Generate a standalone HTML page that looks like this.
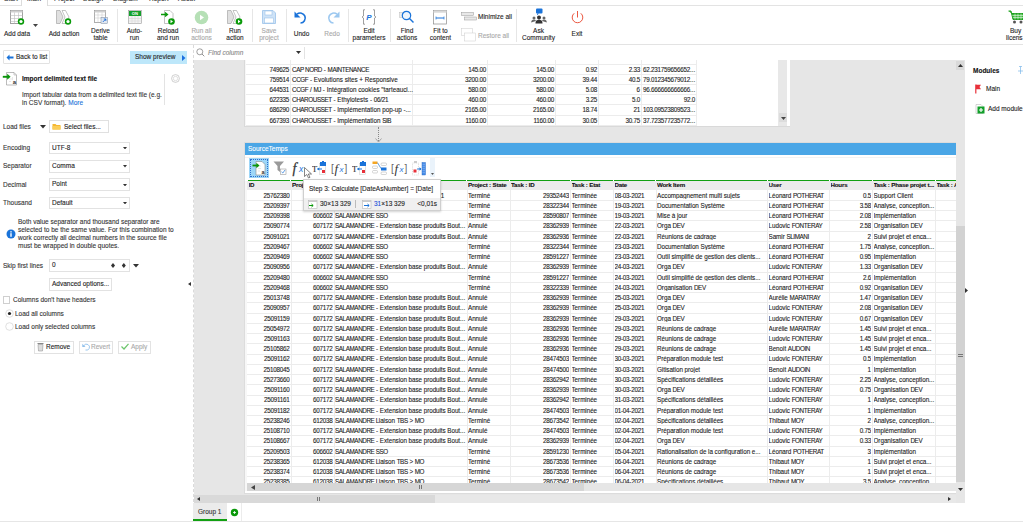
<!DOCTYPE html><html><head><meta charset="utf-8"><style>
html,body{margin:0;padding:0;width:1023px;height:522px;overflow:hidden;background:#fff;font-family:'Liberation Sans',sans-serif;}
.t{position:absolute;white-space:nowrap;-webkit-text-stroke:0.1px currentColor;}
.b{position:absolute;box-sizing:border-box;}
</style></head><body>
<div class="b" style="left:0px;top:0px;width:1023px;height:6px;background:#fff;border-bottom:1px solid #e3e3e3"></div>
<div class="b" style="left:21px;top:0px;width:27px;height:7px;background:#fff;border-left:1px solid #dcdcdc;border-right:1px solid #dcdcdc"></div>
<div class="t" style="left:4px;top:-4.90px;font-size:6.5px;line-height:7.80px;color:#333;font-weight:normal;">Start</div>
<div class="t" style="left:27px;top:-4.90px;font-size:6.5px;line-height:7.80px;color:#333;font-weight:normal;">Main</div>
<div class="t" style="left:54px;top:-4.90px;font-size:6.5px;line-height:7.80px;color:#333;font-weight:normal;">Project</div>
<div class="t" style="left:83px;top:-4.90px;font-size:6.5px;line-height:7.80px;color:#333;font-weight:normal;">Design</div>
<div class="t" style="left:113px;top:-4.90px;font-size:6.5px;line-height:7.80px;color:#333;font-weight:normal;">Diagram</div>
<div class="t" style="left:149px;top:-4.90px;font-size:6.5px;line-height:7.80px;color:#333;font-weight:normal;">Report</div>
<div class="t" style="left:178px;top:-4.90px;font-size:6.5px;line-height:7.80px;color:#333;font-weight:normal;">About</div>
<div class="b" style="left:0px;top:6px;width:1023px;height:39px;background:#fff;border-bottom:1px solid #e3e3e3"></div>
<div class="b" style="left:117px;top:9px;width:1px;height:33px;background:#e6e6e6"></div>
<div class="b" style="left:252px;top:9px;width:1px;height:33px;background:#e6e6e6"></div>
<div class="b" style="left:286px;top:9px;width:1px;height:33px;background:#e6e6e6"></div>
<div class="b" style="left:348px;top:9px;width:1px;height:33px;background:#e6e6e6"></div>
<div class="b" style="left:390px;top:9px;width:1px;height:33px;background:#e6e6e6"></div>
<div class="b" style="left:516px;top:9px;width:1px;height:33px;background:#e6e6e6"></div>
<svg class="b" style="left:10px;top:10px" width="15" height="15" viewBox="0 0 15 15"><rect x="0.5" y="0.5" width="12" height="13" fill="#fff" stroke="#8a8a8a" stroke-width="0.8"/>
<rect x="0.5" y="0.5" width="12" height="2" fill="#cfcfcf"/>
<path d="M0.5 5.5H12.5M0.5 8.5H12.5M0.5 11.5H12.5M4.5 2.5V13.5M8.5 2.5V13.5" stroke="#bdbdbd" stroke-width="0.6"/>
<circle cx="11" cy="11.5" r="3.2" fill="#0a9a0a"/><circle cx="11" cy="11.5" r="1.6" fill="#fff"/></svg>
<div class="t" style="left:-83px;width:200px;text-align:center;top:30.10px;font-size:6.5px;line-height:7.80px;color:#222;font-weight:normal;">Add data</div>
<svg class="b" style="left:33px;top:24px" width="5" height="3" viewBox="0 0 5 3"><path d="M0 0H5L2.5 3Z" fill="#444"/></svg>
<svg class="b" style="left:56px;top:10px" width="16" height="15" viewBox="0 0 16 15"><path d="M0.5 0.5H4L7 7L4 13.5H0.5Z" fill="#e0e0e0" stroke="#9a9a9a" stroke-width="0.6"/>
<path d="M6 0.5H9.5L13 7L9.5 13.5H6L9 7Z" fill="#fff" stroke="#9a9a9a" stroke-width="0.6"/>
<circle cx="12" cy="11.5" r="3.2" fill="#0a9a0a"/><circle cx="12" cy="11.5" r="1.6" fill="#fff"/></svg>
<div class="t" style="left:-36px;width:200px;text-align:center;top:30.10px;font-size:6.5px;line-height:7.80px;color:#222;font-weight:normal;">Add action</div>
<svg class="b" style="left:94px;top:10px" width="14" height="15" viewBox="0 0 14 15"><rect x="0.5" y="0.5" width="11" height="12" fill="#fff" stroke="#8a8a8a" stroke-width="0.7"/>
<rect x="0.5" y="0.5" width="11" height="2" fill="#cfcfcf"/>
<path d="M0.5 5H11.5M0.5 8H11.5M4 2.5V12.5M8 2.5V12.5" stroke="#c4c4c4" stroke-width="0.5"/>
<rect x="7" y="7.5" width="6.5" height="6" fill="#dfe6f0" stroke="#7a8aa0" stroke-width="0.5"/>
<path d="M8.8 12L11.8 9M9.8 9H11.8V11" stroke="#1e6fd9" stroke-width="0.9" fill="none"/></svg>
<div class="t" style="left:0.5px;width:200px;text-align:center;top:26.90px;font-size:6.5px;line-height:7.80px;color:#222;font-weight:normal;">Derive</div>
<div class="t" style="left:0.5px;width:200px;text-align:center;top:33.70px;font-size:6.5px;line-height:7.80px;color:#222;font-weight:normal;">table</div>
<svg class="b" style="left:128px;top:10px" width="14" height="14" viewBox="0 0 14 14"><rect x="0.5" y="0.5" width="13" height="13" fill="#f4f4f4" stroke="#9a9a9a" stroke-width="0.6"/>
<rect x="1" y="1" width="12" height="5" fill="#13a02b"/>
<text x="7" y="5.2" font-size="4.2" font-family="Liberation Sans" font-weight="bold" fill="#fff" text-anchor="middle">ON</text>
<path d="M1 8.5H13M1 11H13M4 6V13.5M7 6V13.5M10 6V13.5" stroke="#d0d0d0" stroke-width="0.5"/></svg>
<div class="t" style="left:34.5px;width:200px;text-align:center;top:26.90px;font-size:6.5px;line-height:7.80px;color:#222;font-weight:normal;">Auto-</div>
<div class="t" style="left:34.5px;width:200px;text-align:center;top:33.70px;font-size:6.5px;line-height:7.80px;color:#222;font-weight:normal;">run</div>
<svg class="b" style="left:160px;top:10px" width="16" height="15" viewBox="0 0 16 15"><path d="M4.5 0.5H10L13 3.5V13.5H4.5Z" fill="#fff" stroke="#9a9a9a" stroke-width="0.6"/>
<path d="M1 4.5H7M5 2.5L7.5 4.5L5 6.5" stroke="#0a9a0a" stroke-width="1.3" fill="none"/>
<circle cx="11.5" cy="11.5" r="3.3" fill="#0a9a0a"/><path d="M10.5 9.8V13.2L13 11.5Z" fill="#fff"/></svg>
<div class="t" style="left:68px;width:200px;text-align:center;top:26.90px;font-size:6.5px;line-height:7.80px;color:#222;font-weight:normal;">Reload</div>
<div class="t" style="left:68px;width:200px;text-align:center;top:33.70px;font-size:6.5px;line-height:7.80px;color:#222;font-weight:normal;">and run</div>
<svg class="b" style="left:194px;top:10px" width="15" height="15" viewBox="0 0 15 15"><circle cx="7.5" cy="7.5" r="6.8" fill="#b6e0b6"/><path d="M6 4.8V10.2L10 7.5Z" fill="#fff"/></svg>
<div class="t" style="left:101.5px;width:200px;text-align:center;top:26.90px;font-size:6.5px;line-height:7.80px;color:#a8a8a8;font-weight:normal;">Run all</div>
<div class="t" style="left:101.5px;width:200px;text-align:center;top:33.70px;font-size:6.5px;line-height:7.80px;color:#a8a8a8;font-weight:normal;">actions</div>
<svg class="b" style="left:227px;top:10px" width="16" height="15" viewBox="0 0 16 15"><path d="M0.5 0.5H4L7 7L4 13.5H0.5Z" fill="#e0e0e0" stroke="#9a9a9a" stroke-width="0.6"/>
<path d="M6 0.5H9.5L13 7L9.5 13.5H6L9 7Z" fill="#fff" stroke="#9a9a9a" stroke-width="0.6"/>
<circle cx="12" cy="11.5" r="3.3" fill="#0a9a0a"/><path d="M11 9.8V13.2L13.5 11.5Z" fill="#fff"/></svg>
<div class="t" style="left:135px;width:200px;text-align:center;top:26.90px;font-size:6.5px;line-height:7.80px;color:#222;font-weight:normal;">Run</div>
<div class="t" style="left:135px;width:200px;text-align:center;top:33.70px;font-size:6.5px;line-height:7.80px;color:#222;font-weight:normal;">action</div>
<svg class="b" style="left:262px;top:10px" width="14" height="14" viewBox="0 0 14 14"><path d="M0.5 0.5H11L13.5 3V13.5H0.5Z" fill="#cfe3f7" stroke="#9cc3ea" stroke-width="0.8"/>
<rect x="3" y="1" width="7" height="4" fill="#fff" stroke="#9cc3ea" stroke-width="0.6"/>
<rect x="2.5" y="8" width="9" height="5" fill="#fff" stroke="#9cc3ea" stroke-width="0.6"/></svg>
<div class="t" style="left:169px;width:200px;text-align:center;top:26.90px;font-size:6.5px;line-height:7.80px;color:#a8a8a8;font-weight:normal;">Save</div>
<div class="t" style="left:169px;width:200px;text-align:center;top:33.70px;font-size:6.5px;line-height:7.80px;color:#a8a8a8;font-weight:normal;">project</div>
<svg class="b" style="left:294px;top:11px" width="15" height="13" viewBox="0 0 15 13"><path d="M3 3.2 A5 5 0 1 1 6.5 12" stroke="#1a73d9" stroke-width="1.6" fill="none"/>
<path d="M0.5 0.5V6.5H6.5Z" fill="#1a73d9"/></svg>
<div class="t" style="left:201.5px;width:200px;text-align:center;top:30.10px;font-size:6.5px;line-height:7.80px;color:#222;font-weight:normal;">Undo</div>
<svg class="b" style="left:325px;top:11px" width="15" height="13" viewBox="0 0 15 13"><path d="M12 3.2 A5 5 0 1 0 8.5 12" stroke="#9cc8f0" stroke-width="1.6" fill="none"/>
<path d="M14.5 0.5V6.5H8.5Z" fill="#9cc8f0"/></svg>
<div class="t" style="left:232px;width:200px;text-align:center;top:30.10px;font-size:6.5px;line-height:7.80px;color:#a8a8a8;font-weight:normal;">Redo</div>
<svg class="b" style="left:361px;top:9px" width="16" height="16" viewBox="0 0 16 16"><path d="M4 0.8H2.5V7L1 8L2.5 9V15.2H4" stroke="#777" stroke-width="0.7" fill="none"/>
<path d="M12 0.8H13.5V7L15 8L13.5 9V15.2H12" stroke="#777" stroke-width="0.7" fill="none"/>
<text x="8" y="10.5" font-size="8" font-family="Liberation Sans" font-weight="bold" font-style="italic" fill="#1a73d9" text-anchor="middle">P</text></svg>
<div class="t" style="left:269px;width:200px;text-align:center;top:26.90px;font-size:6.5px;line-height:7.80px;color:#222;font-weight:normal;">Edit</div>
<div class="t" style="left:269px;width:200px;text-align:center;top:33.70px;font-size:6.5px;line-height:7.80px;color:#222;font-weight:normal;">parameters</div>
<svg class="b" style="left:399px;top:10px" width="16" height="15" viewBox="0 0 16 15"><rect x="0.5" y="2.5" width="5" height="5" fill="#eee" stroke="#bbb" stroke-width="0.5"/>
<circle cx="7.5" cy="5.5" r="4.2" fill="#eef5fd" stroke="#1a73d9" stroke-width="1.2"/>
<path d="M10.5 8.5L14.5 12.5" stroke="#1a73d9" stroke-width="1.5"/></svg>
<div class="t" style="left:307px;width:200px;text-align:center;top:26.90px;font-size:6.5px;line-height:7.80px;color:#222;font-weight:normal;">Find</div>
<div class="t" style="left:307px;width:200px;text-align:center;top:33.70px;font-size:6.5px;line-height:7.80px;color:#222;font-weight:normal;">actions</div>
<svg class="b" style="left:433px;top:10px" width="14" height="15" viewBox="0 0 14 15"><rect x="0.5" y="0.5" width="13" height="13.5" fill="#fff" stroke="#8a8a8a" stroke-width="0.7"/>
<rect x="0.5" y="0.5" width="13" height="2.2" fill="#d8d8d8"/>
<path d="M3 8H11" stroke="#1a73d9" stroke-width="1"/><path d="M3 6.5V9.5M11 6.5V9.5" stroke="#1a73d9" stroke-width="0.7"/></svg>
<div class="t" style="left:340.5px;width:200px;text-align:center;top:26.90px;font-size:6.5px;line-height:7.80px;color:#222;font-weight:normal;">Fit to</div>
<div class="t" style="left:340.5px;width:200px;text-align:center;top:33.70px;font-size:6.5px;line-height:7.80px;color:#222;font-weight:normal;">content</div>
<svg class="b" style="left:461px;top:12px" width="16" height="9" viewBox="0 0 16 9"><rect x="0.5" y="0.5" width="12" height="3" fill="#e8e8e8" stroke="#999" stroke-width="0.5"/>
<rect x="3.5" y="5" width="12" height="3" fill="#e8e8e8" stroke="#999" stroke-width="0.5"/></svg>
<div class="t" style="left:478px;top:12.90px;font-size:6.5px;line-height:7.80px;color:#222;font-weight:normal;">Minimize all</div>
<svg class="b" style="left:461px;top:28px" width="16" height="14" viewBox="0 0 16 14"><rect x="0.5" y="0.5" width="11" height="7" fill="#fff" stroke="#ccc" stroke-width="0.5"/>
<rect x="3.5" y="5" width="11" height="8" fill="#fff" stroke="#ccc" stroke-width="0.5"/></svg>
<div class="t" style="left:478px;top:31.90px;font-size:6.5px;line-height:7.80px;color:#a8a8a8;font-weight:normal;">Restore all</div>
<svg class="b" style="left:530px;top:8px" width="18" height="17" viewBox="0 0 18 17"><rect x="6" y="0.5" width="6.5" height="5" rx="1" fill="#1a73d9"/><path d="M7 5.5V7.3L9 5.5Z" fill="#1a73d9"/><circle cx="9" cy="9.5" r="2" fill="#333"/><path d="M5.5 15.5C5.5 12.5 7 11.8 9 11.8S12.5 12.5 12.5 15.5Z" fill="#333"/><circle cx="4" cy="10" r="1.5" fill="#666"/><path d="M1.2 14.5C1.2 12.3 2.5 11.8 4 11.8S5.8 12.2 5.8 13Z" fill="#666"/><circle cx="14" cy="10" r="1.5" fill="#666"/><path d="M16.8 14.5C16.8 12.3 15.5 11.8 14 11.8S12.2 12.2 12.2 13Z" fill="#666"/></svg>
<div class="t" style="left:438.5px;width:200px;text-align:center;top:26.90px;font-size:6.5px;line-height:7.80px;color:#222;font-weight:normal;">Ask</div>
<div class="t" style="left:438.5px;width:200px;text-align:center;top:33.70px;font-size:6.5px;line-height:7.80px;color:#222;font-weight:normal;">Community</div>
<svg class="b" style="left:570px;top:10px" width="15" height="15" viewBox="0 0 15 15"><path d="M4.2 3.3A5.3 5.3 0 1 0 10.8 3.3" stroke="#e8442a" stroke-width="0.9" fill="none"/>
<path d="M7.5 1V7.5" stroke="#e8442a" stroke-width="0.9"/></svg>
<div class="t" style="left:477px;width:200px;text-align:center;top:30.10px;font-size:6.5px;line-height:7.80px;color:#222;font-weight:normal;">Exit</div>
<svg class="b" style="left:1008px;top:10px" width="16" height="15" viewBox="0 0 16 15"><path d="M0.5 1H3L5 9.5H15L16.5 3.5H3.5" stroke="#1e9e1e" stroke-width="1" fill="#3cb93c"/><path d="M4.3 5.5H16M4.8 7.5H15.5M7 3.5V9.5M10 3.5V9.5M13 3.5V9.5" stroke="#fff" stroke-width="0.5"/><circle cx="6.5" cy="12" r="1.5" fill="#555"/><circle cx="13" cy="12" r="1.5" fill="#555"/></svg>
<div class="t" style="left:1010px;top:26.90px;font-size:6.5px;line-height:7.80px;color:#222;font-weight:normal;">Buy</div>
<div class="t" style="left:1006px;top:33.70px;font-size:6.5px;line-height:7.80px;color:#222;font-weight:normal;">licens</div>
<div class="b" style="left:0px;top:45px;width:193px;height:477px;background:#fff"></div>
<div class="b" style="left:193px;top:45px;width:1px;height:477px;border-left:1px dashed #dadada"></div>
<div class="b" style="left:3px;top:50px;width:47px;height:14px;background:#fff;border:1px solid #e2e2e2;border-radius:1px"></div>
<svg class="b" style="left:6px;top:54px" width="8" height="7" viewBox="0 0 8 7"><path d="M0.5 3.5L3.5 0.5V2.5H7.5V4.5H3.5V6.5Z" fill="#1a73d9"/></svg>
<div class="t" style="left:16px;top:53.40px;font-size:6.5px;line-height:7.80px;color:#222;font-weight:normal;">Back to list</div>
<div class="b" style="left:130px;top:51px;width:57px;height:13px;background:#bde7fa"></div>
<div class="t" style="left:135px;top:53.40px;font-size:6.5px;line-height:7.80px;color:#222;font-weight:normal;">Show preview</div>
<svg class="b" style="left:181.5px;top:54.5px" width="4" height="6" viewBox="0 0 4 6"><path d="M0 0L3.5 3L0 6Z" fill="#1a6fe0"/></svg>
<svg class="b" style="left:2px;top:71px" width="15" height="15" viewBox="0 0 15 15"><path d="M4.5 1.5H12L14.5 4V14H4.5Z" fill="#fff" stroke="#8f8f8f" stroke-width="0.6"/><path d="M12 1.5V4H14.5" fill="none" stroke="#999" stroke-width="0.5"/><path d="M7 8H10M7 10.5H9M10.5 6V9" stroke="#d0d0d0" stroke-width="0.5"/><path d="M0.8 5.8H6" stroke="#0a940a" stroke-width="1.9"/><path d="M5.2 2.8L8.6 5.8L5.2 8.8Z" fill="#0a940a"/><text x="12.3" y="13.4" font-size="6" font-family="Liberation Sans" font-weight="bold" fill="#333" text-anchor="middle">a</text></svg>
<div class="t" style="left:22px;top:75.10px;font-size:6.5px;line-height:7.80px;color:#111;font-weight:bold;">Import delimited text file</div>
<div class="t" style="left:22px;top:91.10px;font-size:6.5px;line-height:7.80px;color:#333;font-weight:normal;">Import tabular data from a delimited text file (e.g.</div>
<div class="t" style="left:22px;top:98.70px;font-size:6.5px;line-height:7.80px;color:#333;font-weight:normal;">in CSV format). <span style="color:#1a73d9">More</span></div>
<div class="b" style="left:163.5px;top:74px;width:1px;height:31px;background:#e3e3e3"></div>
<svg class="b" style="left:170.5px;top:74px" width="9" height="9" viewBox="0 0 9 9"><circle cx="4.5" cy="4.5" r="3.9" fill="none" stroke="#b0b0b0" stroke-width="0.6"/><circle cx="4.5" cy="4.5" r="2.2" fill="none" stroke="#c0c0c0" stroke-width="0.5"/></svg>
<div class="t" style="left:3px;top:123.30px;font-size:6.5px;line-height:7.80px;color:#333;font-weight:normal;">Load files</div>
<svg class="b" style="left:40px;top:125px" width="6" height="4" viewBox="0 0 6 4"><path d="M0 0H6L3 3.5Z" fill="#333"/></svg>
<div class="b" style="left:49px;top:120px;width:60px;height:13px;background:#fff;border:1px solid #e0e0e0"></div>
<svg class="b" style="left:52px;top:123px" width="9" height="7" viewBox="0 0 9 7"><path d="M0.5 1H3.5L4.5 2H8.5V6.5H0.5Z" fill="#f5b731"/><path d="M0.5 3H8.5V6.5H0.5Z" fill="#fbcd57"/></svg>
<div class="t" style="left:64px;top:122.50px;font-size:6.5px;line-height:7.80px;color:#222;font-weight:normal;">Select files...</div>
<div class="t" style="left:3px;top:143.80px;font-size:6.5px;line-height:7.80px;color:#333;font-weight:normal;">Encoding</div>
<div class="b" style="left:49px;top:141.5px;width:81px;height:12.5px;background:#fff;border:1px solid #e2e2e2"></div>
<div class="t" style="left:52px;top:143.60px;font-size:6.5px;line-height:7.80px;color:#222;font-weight:normal;">UTF-8</div>
<svg class="b" style="left:122.5px;top:146.7px" width="4" height="2.5" viewBox="0 0 4 2.5"><path d="M0 0H4L2 2.5Z" fill="#333"/></svg>
<div class="t" style="left:3px;top:162.30px;font-size:6.5px;line-height:7.80px;color:#333;font-weight:normal;">Separator</div>
<div class="b" style="left:49px;top:160px;width:81px;height:12.5px;background:#fff;border:1px solid #e2e2e2"></div>
<div class="t" style="left:52px;top:162.10px;font-size:6.5px;line-height:7.80px;color:#222;font-weight:normal;">Comma</div>
<svg class="b" style="left:122.5px;top:165.2px" width="4" height="2.5" viewBox="0 0 4 2.5"><path d="M0 0H4L2 2.5Z" fill="#333"/></svg>
<div class="t" style="left:3px;top:180.60px;font-size:6.5px;line-height:7.80px;color:#333;font-weight:normal;">Decimal</div>
<div class="b" style="left:49px;top:178.3px;width:81px;height:12.5px;background:#fff;border:1px solid #e2e2e2"></div>
<div class="t" style="left:52px;top:180.40px;font-size:6.5px;line-height:7.80px;color:#222;font-weight:normal;">Point</div>
<svg class="b" style="left:122.5px;top:183.5px" width="4" height="2.5" viewBox="0 0 4 2.5"><path d="M0 0H4L2 2.5Z" fill="#333"/></svg>
<div class="t" style="left:3px;top:198.80px;font-size:6.5px;line-height:7.80px;color:#333;font-weight:normal;">Thousand</div>
<div class="b" style="left:49px;top:196.5px;width:81px;height:12.5px;background:#fff;border:1px solid #e2e2e2"></div>
<div class="t" style="left:52px;top:198.60px;font-size:6.5px;line-height:7.80px;color:#222;font-weight:normal;">Default</div>
<svg class="b" style="left:122.5px;top:201.7px" width="4" height="2.5" viewBox="0 0 4 2.5"><path d="M0 0H4L2 2.5Z" fill="#333"/></svg>
<svg class="b" style="left:6px;top:229px" width="10" height="10" viewBox="0 0 10 10"><circle cx="5" cy="5" r="4.5" fill="#1a73d9"/><rect x="4.3" y="4.2" width="1.4" height="3.6" fill="#fff"/><rect x="4.3" y="2.2" width="1.4" height="1.3" fill="#fff"/></svg>
<div class="t" style="left:18px;top:217.80px;font-size:6.5px;line-height:7.80px;color:#333;font-weight:normal;">Both value separator and thousand separator are</div>
<div class="t" style="left:18px;top:226.00px;font-size:6.5px;line-height:7.80px;color:#333;font-weight:normal;">selected to be the same value. For this combination to</div>
<div class="t" style="left:18px;top:234.20px;font-size:6.5px;line-height:7.80px;color:#333;font-weight:normal;">work correctly all decimal numbers in the source file</div>
<div class="t" style="left:18px;top:242.40px;font-size:6.5px;line-height:7.80px;color:#333;font-weight:normal;">must be wrapped in double quotes.</div>
<div class="t" style="left:3px;top:261.70px;font-size:6.5px;line-height:7.80px;color:#333;font-weight:normal;">Skip first lines</div>
<div class="b" style="left:49px;top:258.5px;width:81px;height:13px;background:#fff;border:1px solid #e2e2e2"></div>
<div class="t" style="left:52px;top:260.60px;font-size:6.5px;line-height:7.80px;color:#222;font-weight:normal;">0</div>
<svg class="b" style="left:110.5px;top:262.5px" width="16" height="5" viewBox="0 0 16 5"><path d="M2 0L4 2.5L2 5L0 2.5Z" fill="#333"/><path d="M12.8 0L14.8 2.5L12.8 5L10.8 2.5Z" fill="#333"/></svg>
<svg class="b" style="left:133px;top:264px" width="6" height="4" viewBox="0 0 6 4"><path d="M0 0H6L3 3.5Z" fill="#333"/></svg>
<div class="b" style="left:49px;top:277.5px;width:63px;height:13px;background:#fff;border:1px solid #e2e2e2"></div>
<div class="t" style="left:52px;top:279.90px;font-size:6.5px;line-height:7.80px;color:#222;font-weight:normal;">Advanced options...</div>
<div class="b" style="left:3px;top:296px;width:7px;height:8px;background:#fff;border:1px solid #cfcfcf"></div>
<div class="t" style="left:13px;top:296.10px;font-size:6.5px;line-height:7.80px;color:#333;font-weight:normal;">Columns don't have headers</div>
<svg class="b" style="left:5px;top:309px" width="9" height="9" viewBox="0 0 9 9"><circle cx="4.5" cy="4.5" r="3.8" fill="#fff" stroke="#ccc" stroke-width="0.6"/><circle cx="4.5" cy="4.5" r="1.6" fill="#222"/></svg>
<div class="t" style="left:15px;top:309.70px;font-size:6.5px;line-height:7.80px;color:#333;font-weight:normal;">Load all columns</div>
<svg class="b" style="left:5px;top:322px" width="9" height="9" viewBox="0 0 9 9"><circle cx="4.5" cy="4.5" r="3.8" fill="#fff" stroke="#ccc" stroke-width="0.6"/></svg>
<div class="t" style="left:15px;top:323.00px;font-size:6.5px;line-height:7.80px;color:#333;font-weight:normal;">Load only selected columns</div>
<div class="b" style="left:34px;top:340.5px;width:40px;height:13px;background:#fff;border:1px solid #e2e2e2"></div>
<svg class="b" style="left:37px;top:342px" width="7" height="10" viewBox="0 0 7 10"><rect x="0.5" y="1" width="6" height="1" fill="#888"/><path d="M1 2.5H6L5.5 9H1.5Z" fill="#ddd" stroke="#888" stroke-width="0.5"/></svg>
<div class="t" style="left:46px;top:343.10px;font-size:6.5px;line-height:7.80px;color:#222;font-weight:normal;">Remove</div>
<div class="b" style="left:79px;top:340.5px;width:34px;height:13px;background:#fff;border:1px solid #e3e3e3"></div>
<svg class="b" style="left:82px;top:342.5px" width="8" height="8" viewBox="0 0 8 8"><path d="M2 2.5A3 3 0 1 1 3.5 7" stroke="#8fbfeb" stroke-width="0.9" fill="none"/><path d="M0.3 0.8V4H3.5Z" fill="#8fbfeb"/></svg>
<div class="t" style="left:91px;top:343.10px;font-size:6.5px;line-height:7.80px;color:#a8a8a8;font-weight:normal;">Revert</div>
<div class="b" style="left:118px;top:340.5px;width:33px;height:13px;background:#fff;border:1px solid #e3e3e3"></div>
<svg class="b" style="left:121px;top:343px" width="8" height="7" viewBox="0 0 8 7"><path d="M0.5 3.5L3 6L7.5 0.8" stroke="#6cc56c" stroke-width="1.2" fill="none"/></svg>
<div class="t" style="left:131px;top:343.10px;font-size:6.5px;line-height:7.80px;color:#a8a8a8;font-weight:normal;">Apply</div>
<svg class="b" style="left:188px;top:282px" width="3" height="4" viewBox="0 0 3 4"><path d="M3 0V4L0 2Z" fill="#333"/></svg>
<div class="b" style="left:194px;top:45px;width:829px;height:15px;background:#fff"></div>
<svg class="b" style="left:196px;top:48px" width="9" height="9" viewBox="0 0 9 9"><circle cx="3.8" cy="3.8" r="3" fill="none" stroke="#777" stroke-width="0.7"/><path d="M6 6L8.3 8.3" stroke="#777" stroke-width="0.8"/></svg>
<div class="t" style="left:208px;top:48.60px;font-size:6.5px;line-height:7.80px;color:#888;font-weight:normal;font-style:italic">Find column</div>
<svg class="b" style="left:296px;top:51px" width="5" height="3" viewBox="0 0 5 3"><path d="M0 0H5L2.5 3Z" fill="#333"/></svg>
<div class="b" style="left:304px;top:47px;width:1px;height:12px;background:#e3e3e3"></div>
<div class="b" style="left:194px;top:59.5px;width:829px;height:1px;background:#ececec"></div>
<div class="b" style="left:194px;top:60px;width:762px;height:435px;background:#e6e6e6"></div>
<div class="b" style="left:0;top:0;width:1023px;height:522px;clip-path:inset(60px 67px 27px 194px)">
<div class="b" style="left:244px;top:56px;width:546px;height:71px;border:1px solid #d9d9d9;background:#f7f7f7"></div>
<div class="b" style="left:246px;top:60px;width:544px;height:66px;background:#fff"></div>
<div class="b" style="left:290px;top:60px;width:1px;height:66px;background:#ececec"></div>
<div class="b" style="left:412px;top:60px;width:1px;height:66px;background:#ececec"></div>
<div class="b" style="left:487px;top:60px;width:1px;height:66px;background:#ececec"></div>
<div class="b" style="left:555px;top:60px;width:1px;height:66px;background:#ececec"></div>
<div class="b" style="left:598px;top:60px;width:1px;height:66px;background:#ececec"></div>
<div class="b" style="left:641px;top:60px;width:1px;height:66px;background:#ececec"></div>
<div class="b" style="left:696px;top:60px;width:1px;height:66px;background:#ececec"></div>
<div class="b" style="left:246px;top:63.6px;width:450px;height:1px;background:#ececec"></div>
<div class="b" style="left:246px;top:73.8px;width:450px;height:1px;background:#ececec"></div>
<div class="b" style="left:246px;top:84.0px;width:450px;height:1px;background:#ececec"></div>
<div class="b" style="left:246px;top:94.2px;width:450px;height:1px;background:#ececec"></div>
<div class="b" style="left:246px;top:104.4px;width:450px;height:1px;background:#ececec"></div>
<div class="b" style="left:246px;top:114.6px;width:450px;height:1px;background:#ececec"></div>
<div class="b" style="left:246px;top:124.8px;width:450px;height:1px;background:#ececec"></div>
<div class="t" style="right:734px;top:65.62px;font-size:6.3px;line-height:7.56px;color:#1c1c1c;font-weight:normal;"><span style="letter-spacing:-0.25px">749625</span></div>
<div class="t" style="left:292px;top:65.62px;font-size:6.3px;line-height:7.56px;color:#1c1c1c;font-weight:normal;"><span style="letter-spacing:-0.4px">CAP NORD</span> - <span style="letter-spacing:-0.4px">MAINTENANCE</span></div>
<div class="t" style="right:537px;top:65.62px;font-size:6.3px;line-height:7.56px;color:#1c1c1c;font-weight:normal;"><span style="letter-spacing:-0.25px">145.00</span></div>
<div class="t" style="right:469px;top:65.62px;font-size:6.3px;line-height:7.56px;color:#1c1c1c;font-weight:normal;"><span style="letter-spacing:-0.25px">145.00</span></div>
<div class="t" style="right:426px;top:65.62px;font-size:6.3px;line-height:7.56px;color:#1c1c1c;font-weight:normal;"><span style="letter-spacing:-0.25px">0.92</span></div>
<div class="t" style="right:383px;top:65.62px;font-size:6.3px;line-height:7.56px;color:#1c1c1c;font-weight:normal;"><span style="letter-spacing:-0.25px">2.33</span></div>
<div class="t" style="left:643px;top:65.62px;font-size:6.3px;line-height:7.56px;color:#1c1c1c;font-weight:normal;"><span style="letter-spacing:-0.25px">62.231759656652</span>...</div>
<div class="t" style="right:734px;top:75.82px;font-size:6.3px;line-height:7.56px;color:#1c1c1c;font-weight:normal;"><span style="letter-spacing:-0.25px">759514</span></div>
<div class="t" style="left:292px;top:75.82px;font-size:6.3px;line-height:7.56px;color:#1c1c1c;font-weight:normal;"><span style="letter-spacing:-0.4px">CCGF</span> - Evolutions sites + Responsive</div>
<div class="t" style="right:537px;top:75.82px;font-size:6.3px;line-height:7.56px;color:#1c1c1c;font-weight:normal;"><span style="letter-spacing:-0.25px">3200.00</span></div>
<div class="t" style="right:469px;top:75.82px;font-size:6.3px;line-height:7.56px;color:#1c1c1c;font-weight:normal;"><span style="letter-spacing:-0.25px">3200.00</span></div>
<div class="t" style="right:426px;top:75.82px;font-size:6.3px;line-height:7.56px;color:#1c1c1c;font-weight:normal;"><span style="letter-spacing:-0.25px">39.44</span></div>
<div class="t" style="right:383px;top:75.82px;font-size:6.3px;line-height:7.56px;color:#1c1c1c;font-weight:normal;"><span style="letter-spacing:-0.25px">40.5</span></div>
<div class="t" style="left:643px;top:75.82px;font-size:6.3px;line-height:7.56px;color:#1c1c1c;font-weight:normal;"><span style="letter-spacing:-0.25px">79.012345679012</span>...</div>
<div class="t" style="right:734px;top:86.02px;font-size:6.3px;line-height:7.56px;color:#1c1c1c;font-weight:normal;"><span style="letter-spacing:-0.25px">644531</span></div>
<div class="t" style="left:292px;top:86.02px;font-size:6.3px;line-height:7.56px;color:#1c1c1c;font-weight:normal;"><span style="letter-spacing:-0.4px">CCGF</span> / <span style="letter-spacing:-0.4px">MJ</span> - Int&eacute;gration cookies "tarteauci...</div>
<div class="t" style="right:537px;top:86.02px;font-size:6.3px;line-height:7.56px;color:#1c1c1c;font-weight:normal;"><span style="letter-spacing:-0.25px">580.00</span></div>
<div class="t" style="right:469px;top:86.02px;font-size:6.3px;line-height:7.56px;color:#1c1c1c;font-weight:normal;"><span style="letter-spacing:-0.25px">580.00</span></div>
<div class="t" style="right:426px;top:86.02px;font-size:6.3px;line-height:7.56px;color:#1c1c1c;font-weight:normal;"><span style="letter-spacing:-0.25px">5.08</span></div>
<div class="t" style="right:383px;top:86.02px;font-size:6.3px;line-height:7.56px;color:#1c1c1c;font-weight:normal;">6</div>
<div class="t" style="left:643px;top:86.02px;font-size:6.3px;line-height:7.56px;color:#1c1c1c;font-weight:normal;"><span style="letter-spacing:-0.25px">96.666666666666</span>...</div>
<div class="t" style="right:734px;top:96.22px;font-size:6.3px;line-height:7.56px;color:#1c1c1c;font-weight:normal;"><span style="letter-spacing:-0.25px">622335</span></div>
<div class="t" style="left:292px;top:96.22px;font-size:6.3px;line-height:7.56px;color:#1c1c1c;font-weight:normal;"><span style="letter-spacing:-0.4px">CHAROUSSET</span> - Ethylotests - <span style="letter-spacing:-0.25px">06/21</span></div>
<div class="t" style="right:537px;top:96.22px;font-size:6.3px;line-height:7.56px;color:#1c1c1c;font-weight:normal;"><span style="letter-spacing:-0.25px">460.00</span></div>
<div class="t" style="right:469px;top:96.22px;font-size:6.3px;line-height:7.56px;color:#1c1c1c;font-weight:normal;"><span style="letter-spacing:-0.25px">460.00</span></div>
<div class="t" style="right:426px;top:96.22px;font-size:6.3px;line-height:7.56px;color:#1c1c1c;font-weight:normal;"><span style="letter-spacing:-0.25px">3.25</span></div>
<div class="t" style="right:383px;top:96.22px;font-size:6.3px;line-height:7.56px;color:#1c1c1c;font-weight:normal;"><span style="letter-spacing:-0.25px">5.0</span></div>
<div class="t" style="right:328px;top:96.22px;font-size:6.3px;line-height:7.56px;color:#1c1c1c;font-weight:normal;"><span style="letter-spacing:-0.25px">92.0</span></div>
<div class="t" style="right:734px;top:106.42px;font-size:6.3px;line-height:7.56px;color:#1c1c1c;font-weight:normal;"><span style="letter-spacing:-0.25px">686290</span></div>
<div class="t" style="left:292px;top:106.42px;font-size:6.3px;line-height:7.56px;color:#1c1c1c;font-weight:normal;"><span style="letter-spacing:-0.4px">CHAROUSSET</span> - Impl&eacute;mentation pop-up -...</div>
<div class="t" style="right:537px;top:106.42px;font-size:6.3px;line-height:7.56px;color:#1c1c1c;font-weight:normal;"><span style="letter-spacing:-0.25px">2165.00</span></div>
<div class="t" style="right:469px;top:106.42px;font-size:6.3px;line-height:7.56px;color:#1c1c1c;font-weight:normal;"><span style="letter-spacing:-0.25px">2165.00</span></div>
<div class="t" style="right:426px;top:106.42px;font-size:6.3px;line-height:7.56px;color:#1c1c1c;font-weight:normal;"><span style="letter-spacing:-0.25px">18.74</span></div>
<div class="t" style="right:383px;top:106.42px;font-size:6.3px;line-height:7.56px;color:#1c1c1c;font-weight:normal;"><span style="letter-spacing:-0.25px">21</span></div>
<div class="t" style="left:643px;top:106.42px;font-size:6.3px;line-height:7.56px;color:#1c1c1c;font-weight:normal;"><span style="letter-spacing:-0.25px">103.09523809523</span>...</div>
<div class="t" style="right:734px;top:116.62px;font-size:6.3px;line-height:7.56px;color:#1c1c1c;font-weight:normal;"><span style="letter-spacing:-0.25px">667393</span></div>
<div class="t" style="left:292px;top:116.62px;font-size:6.3px;line-height:7.56px;color:#1c1c1c;font-weight:normal;"><span style="letter-spacing:-0.4px">CHAROUSSET</span> - Impl&eacute;mentation <span style="letter-spacing:-0.4px">SIB</span></div>
<div class="t" style="right:537px;top:116.62px;font-size:6.3px;line-height:7.56px;color:#1c1c1c;font-weight:normal;"><span style="letter-spacing:-0.25px">1160.00</span></div>
<div class="t" style="right:469px;top:116.62px;font-size:6.3px;line-height:7.56px;color:#1c1c1c;font-weight:normal;"><span style="letter-spacing:-0.25px">1160.00</span></div>
<div class="t" style="right:426px;top:116.62px;font-size:6.3px;line-height:7.56px;color:#1c1c1c;font-weight:normal;"><span style="letter-spacing:-0.25px">30.05</span></div>
<div class="t" style="right:383px;top:116.62px;font-size:6.3px;line-height:7.56px;color:#1c1c1c;font-weight:normal;"><span style="letter-spacing:-0.25px">30.75</span></div>
<div class="t" style="left:643px;top:116.62px;font-size:6.3px;line-height:7.56px;color:#1c1c1c;font-weight:normal;"><span style="letter-spacing:-0.25px">37.723577235772</span>...</div>
<div class="b" style="left:778px;top:60px;width:9px;height:65.5px;background:#e8e8e8"></div>
<div class="b" style="left:779px;top:113px;width:8px;height:9px;background:#dcdcdc"></div>
<svg class="b" style="left:780.5px;top:116.5px" width="5" height="3" viewBox="0 0 5 3"><path d="M0 0H5L2.5 3Z" fill="#444"/></svg>
<div class="b" style="left:378px;top:127px;width:1px;height:14px;border-left:1px dotted #888"></div>
<svg class="b" style="left:375px;top:138px" width="7" height="5" viewBox="0 0 7 5"><path d="M0.5 0.5L3.5 4L6.5 0.5" stroke="#888" stroke-width="0.7" fill="none"/></svg>
<div class="b" style="left:244px;top:142px;width:714px;height:352px;border:1px solid #dcdcdc;background:#f7f7f7"></div>
<div class="b" style="left:245px;top:143px;width:711px;height:12px;background:#4aa6e6"></div>
<div class="t" style="left:248px;top:145.10px;font-size:6.5px;line-height:7.80px;color:#fff;font-weight:normal;">SourceTemps</div>
<div class="b" style="left:245px;top:155px;width:711px;height:26px;background:#fff"></div>
<div class="b" style="left:245px;top:156.5px;width:711px;height:1px;background:#f3f3f3"></div>
<div class="b" style="left:249px;top:158px;width:20px;height:19.5px;background:#9dd6f8"></div>
<div class="b" style="left:250px;top:159px;width:18px;height:17.5px;border:1px dotted #2f6fcf"></div>
<svg class="b" style="left:252px;top:161px" width="15" height="15" viewBox="0 0 15 15"><path d="M4 0.5H10L13 3.5V14H4Z" fill="#fff" stroke="#8a8a8a" stroke-width="0.6"/><path d="M6 5H9M6 7.5H9M6 10H8" stroke="#ccc" stroke-width="0.5"/><path d="M0.5 4.5H5" stroke="#0a940a" stroke-width="1.8"/><path d="M4.3 1.8L7.5 4.5L4.3 7.2Z" fill="#0a940a"/><text x="11" y="13.3" font-size="5.5" font-family="Liberation Sans" font-weight="bold" fill="#333" text-anchor="middle">a</text></svg>
<svg class="b" style="left:273px;top:161px" width="14" height="14" viewBox="0 0 14 14"><path d="M0.5 0.5H11L7 5V11L4.5 9V5Z" fill="#9a9a9a"/><rect x="7.5" y="8" width="5.5" height="5.5" fill="#fff" stroke="#888" stroke-width="0.5"/><path d="M8.5 10.8L9.8 12L12 9" stroke="#1a73d9" stroke-width="0.7" fill="none"/></svg>
<svg class="b" style="left:292px;top:159px" width="16" height="18" viewBox="0 0 16 18"><text x="0.5" y="13.5" font-size="14" font-family="Liberation Serif" font-style="italic" fill="#333" stroke="#333" stroke-width="0.25">f</text><text x="7" y="13" font-size="8.5" font-family="Liberation Sans" font-style="italic" fill="#1a73d9">x</text></svg>
<svg class="b" style="left:312px;top:160px" width="15" height="16" viewBox="0 0 15 16"><text x="0" y="12" font-size="8.5" font-family="Liberation Serif" fill="#333" stroke="#333" stroke-width="0.15">T</text><rect x="7.5" y="3.5" width="6" height="11" fill="#fff" stroke="#c8c8c8" stroke-width="0.5"/><rect x="8" y="2" width="6" height="4" fill="#1a73d9"/><rect x="10" y="1" width="2" height="1.5" fill="#1a73d9"/><path d="M5.5 9H10" stroke="#1a73d9" stroke-width="1"/><path d="M5 9L7.2 7.5V10.5Z" fill="#1a73d9"/><rect x="10" y="10" width="3" height="3" fill="#e8303a"/></svg>
<svg class="b" style="left:331px;top:159px" width="17" height="18" viewBox="0 0 17 18"><text x="0" y="13" font-size="10" font-family="Liberation Sans" fill="#666">[</text><text x="3.5" y="13.5" font-size="13" font-family="Liberation Serif" font-style="italic" fill="#333">f</text><text x="8.5" y="13" font-size="8" font-family="Liberation Sans" font-style="italic" fill="#1a73d9">x</text><text x="13.5" y="13" font-size="10" font-family="Liberation Sans" fill="#666">]</text></svg>
<svg class="b" style="left:352px;top:160px" width="15" height="16" viewBox="0 0 15 16"><text x="0" y="12" font-size="8.5" font-family="Liberation Serif" fill="#333" stroke="#333" stroke-width="0.15">T</text><rect x="7.5" y="3.5" width="6" height="11" fill="#fff" stroke="#c8c8c8" stroke-width="0.5"/><rect x="8" y="2" width="6" height="4" fill="#1a73d9"/><rect x="10" y="1" width="2" height="1.5" fill="#1a73d9"/><path d="M5.5 9H10" stroke="#1a73d9" stroke-width="1"/><path d="M5 9L7.2 7.5V10.5Z" fill="#1a73d9"/><rect x="10" y="10" width="3" height="3" fill="#e8303a"/></svg>
<svg class="b" style="left:372px;top:160px" width="15" height="16" viewBox="0 0 15 16"><rect x="0.5" y="1.5" width="5" height="2.5" fill="#f5a623"/><rect x="0.5" y="6" width="5" height="2.5" rx="1" fill="#fff" stroke="#aaa" stroke-width="0.5"/><rect x="0.5" y="10.5" width="5" height="2.5" rx="1" fill="#fff" stroke="#aaa" stroke-width="0.5"/><rect x="9" y="3" width="5.5" height="2.5" rx="1" fill="#fff" stroke="#aaa" stroke-width="0.5"/><rect x="9" y="7.5" width="5.5" height="3" fill="#1a73d9"/><rect x="9" y="12" width="5.5" height="2.5" rx="1" fill="#fff" stroke="#aaa" stroke-width="0.5"/><path d="M5.5 2.7L9 8.5" stroke="#1a73d9" stroke-width="0.7"/></svg>
<svg class="b" style="left:391px;top:159px" width="17" height="18" viewBox="0 0 17 18"><text x="0" y="13" font-size="10" font-family="Liberation Sans" fill="#666">[</text><text x="3.5" y="13.5" font-size="13" font-family="Liberation Serif" font-style="italic" fill="#333">f</text><text x="8.5" y="13" font-size="8" font-family="Liberation Sans" font-style="italic" fill="#1a73d9">x</text><text x="13.5" y="13" font-size="10" font-family="Liberation Sans" fill="#666">]</text></svg>
<svg class="b" style="left:412px;top:160px" width="14" height="16" viewBox="0 0 14 16"><rect x="0.5" y="3" width="6" height="12" fill="#fff" stroke="#bbb" stroke-width="0.5" stroke-dasharray="1 0.8"/><rect x="2" y="1" width="3" height="2" fill="#ccc"/><rect x="1.5" y="9.5" width="3" height="3" fill="#e8303a"/><path d="M5 9H9" stroke="#1a73d9" stroke-width="0.9"/><path d="M9.5 9L7.5 7.3V10.7Z" fill="#1a73d9"/><rect x="10" y="2.5" width="3.5" height="12.5" fill="#4b8fe8" stroke="#1a5fc0" stroke-width="0.4"/><path d="M10.5 4.5H13M10.5 6.5H13M10.5 8.5H13M10.5 10.5H13M10.5 12.5H13" stroke="#9cc3f5" stroke-width="0.4"/></svg>
<div class="b" style="left:430px;top:158px;width:5px;height:19px;background:#eaf3fb"></div>
<svg class="b" style="left:431px;top:173px" width="3" height="3" viewBox="0 0 3 3"><path d="M0 0H3L1.5 2Z" fill="#555"/></svg>
<div class="b" style="left:247.5px;top:180px;width:42.5px;height:1.2px;background:#12a012"></div>
<div class="b" style="left:291.0px;top:180px;width:42.0px;height:1.2px;background:#12a012"></div>
<div class="b" style="left:334.0px;top:180px;width:132.0px;height:1.2px;background:#12a012"></div>
<div class="b" style="left:467.0px;top:180px;width:42.0px;height:1.2px;background:#12a012"></div>
<div class="b" style="left:510.0px;top:180px;width:59.5px;height:1.2px;background:#12a012"></div>
<div class="b" style="left:570.5px;top:180px;width:42px;height:1.2px;background:#12a012"></div>
<div class="b" style="left:613.5px;top:180px;width:41.5px;height:1.2px;background:#12a012"></div>
<div class="b" style="left:656.0px;top:180px;width:110.5px;height:1.2px;background:#12a012"></div>
<div class="b" style="left:767.5px;top:180px;width:61px;height:1.2px;background:#12a012"></div>
<div class="b" style="left:829.5px;top:180px;width:42px;height:1.2px;background:#12a012"></div>
<div class="b" style="left:872.5px;top:180px;width:62px;height:1.2px;background:#12a012"></div>
<div class="b" style="left:935.5px;top:180px;width:44px;height:1.2px;background:#12a012"></div>
<div class="b" style="left:247px;top:181px;width:709px;height:9px;background:#ebebeb"></div>
<div class="b" style="left:247px;top:190px;width:709px;height:293px;background:#fff"></div>
<div class="t" style="left:248.5px;top:181.08px;width:42.0px;overflow:hidden;text-overflow:ellipsis;letter-spacing:-0.04px;text-align:left;font-size:6.2px;line-height:7.44px;color:#111;font-weight:bold;letter-spacing:-0.2px;text-overflow:clip">ID</div>
<div class="t" style="left:292.0px;top:181.08px;width:41.5px;overflow:hidden;text-overflow:ellipsis;letter-spacing:-0.04px;text-align:left;font-size:6.2px;line-height:7.44px;color:#111;font-weight:bold;letter-spacing:-0.2px;text-overflow:clip">Project : ID</div>
<div class="t" style="left:335.0px;top:181.08px;width:131.5px;overflow:hidden;text-overflow:ellipsis;letter-spacing:-0.04px;text-align:left;font-size:6.2px;line-height:7.44px;color:#111;font-weight:bold;letter-spacing:-0.2px;text-overflow:clip">Project</div>
<div class="t" style="left:468.0px;top:181.08px;width:41.5px;overflow:hidden;text-overflow:ellipsis;letter-spacing:-0.04px;text-align:left;font-size:6.2px;line-height:7.44px;color:#111;font-weight:bold;letter-spacing:-0.2px;text-overflow:clip">Project : State</div>
<div class="t" style="left:511.0px;top:181.08px;width:59.0px;overflow:hidden;text-overflow:ellipsis;letter-spacing:-0.04px;text-align:left;font-size:6.2px;line-height:7.44px;color:#111;font-weight:bold;letter-spacing:-0.2px;text-overflow:clip">Task : ID</div>
<div class="t" style="left:571.5px;top:181.08px;width:41.5px;overflow:hidden;text-overflow:ellipsis;letter-spacing:-0.04px;text-align:left;font-size:6.2px;line-height:7.44px;color:#111;font-weight:bold;letter-spacing:-0.2px;text-overflow:clip">Task : Etat</div>
<div class="t" style="left:614.5px;top:181.08px;width:41.0px;overflow:hidden;text-overflow:ellipsis;letter-spacing:-0.04px;text-align:left;font-size:6.2px;line-height:7.44px;color:#111;font-weight:bold;letter-spacing:-0.2px;text-overflow:clip">Date</div>
<div class="t" style="left:657.0px;top:181.08px;width:110.0px;overflow:hidden;text-overflow:ellipsis;letter-spacing:-0.04px;text-align:left;font-size:6.2px;line-height:7.44px;color:#111;font-weight:bold;letter-spacing:-0.2px;text-overflow:clip">Work Item</div>
<div class="t" style="left:768.5px;top:181.08px;width:60.5px;overflow:hidden;text-overflow:ellipsis;letter-spacing:-0.04px;text-align:left;font-size:6.2px;line-height:7.44px;color:#111;font-weight:bold;letter-spacing:-0.2px;text-overflow:clip">User</div>
<div class="t" style="left:830.5px;top:181.08px;width:41.5px;overflow:hidden;text-overflow:ellipsis;letter-spacing:-0.04px;text-align:left;font-size:6.2px;line-height:7.44px;color:#111;font-weight:bold;letter-spacing:-0.2px;text-overflow:clip">Hours</div>
<div class="t" style="left:873.5px;top:181.08px;width:61.5px;overflow:hidden;text-overflow:ellipsis;letter-spacing:-0.04px;text-align:left;font-size:6.2px;line-height:7.44px;color:#111;font-weight:bold;letter-spacing:-0.2px;text-overflow:clip">Task : Phase projet t...</div>
<div class="t" style="left:936.5px;top:181.08px;width:43.5px;overflow:hidden;text-overflow:ellipsis;letter-spacing:-0.04px;text-align:left;font-size:6.2px;line-height:7.44px;color:#111;font-weight:bold;letter-spacing:-0.2px;text-overflow:clip">Task : Activit&eacute;</div>
<div class="b" style="left:290.5px;top:181px;width:1px;height:302px;background:#ececec"></div>
<div class="b" style="left:333.5px;top:181px;width:1px;height:302px;background:#ececec"></div>
<div class="b" style="left:466.5px;top:181px;width:1px;height:302px;background:#ececec"></div>
<div class="b" style="left:509.5px;top:181px;width:1px;height:302px;background:#ececec"></div>
<div class="b" style="left:570px;top:181px;width:1px;height:302px;background:#ececec"></div>
<div class="b" style="left:613px;top:181px;width:1px;height:302px;background:#ececec"></div>
<div class="b" style="left:655.5px;top:181px;width:1px;height:302px;background:#ececec"></div>
<div class="b" style="left:767px;top:181px;width:1px;height:302px;background:#ececec"></div>
<div class="b" style="left:829px;top:181px;width:1px;height:302px;background:#ececec"></div>
<div class="b" style="left:872px;top:181px;width:1px;height:302px;background:#ececec"></div>
<div class="b" style="left:935px;top:181px;width:1px;height:302px;background:#ececec"></div>
<div class="b" style="left:0;top:0;width:1023px;height:522px;clip-path:inset(190px 67px 39px 247px)">
<div class="b" style="left:247px;top:199.94px;width:709px;height:1px;background:#ececec"></div>
<div class="t" style="left:250px;top:191.62px;width:39.5px;overflow:hidden;text-overflow:ellipsis;letter-spacing:-0.04px;text-align:right;font-size:6.3px;line-height:7.56px;color:#1c1c1c;font-weight:normal;"><span style="letter-spacing:-0.25px">25762380</span></div>
<div class="t" style="left:292px;top:191.62px;width:40.5px;overflow:hidden;text-overflow:ellipsis;letter-spacing:-0.04px;text-align:right;font-size:6.3px;line-height:7.56px;color:#1c1c1c;font-weight:normal;"><span style="letter-spacing:-0.25px">606602</span></div>
<div class="t" style="left:335px;top:191.62px;width:131px;overflow:hidden;text-overflow:ellipsis;letter-spacing:-0.04px;text-align:left;font-size:6.3px;line-height:7.56px;color:#1c1c1c;font-weight:normal;letter-spacing:-0.06px"><span style="letter-spacing:-0.4px">SALAMANDRE</span> - Accompagnement <span style="letter-spacing:-0.25px">2021</span></div>
<div class="t" style="left:468px;top:191.62px;width:41px;overflow:hidden;text-overflow:ellipsis;letter-spacing:-0.04px;text-align:left;font-size:6.3px;line-height:7.56px;color:#1c1c1c;font-weight:normal;">Termin&eacute;</div>
<div class="t" style="left:511px;top:191.62px;width:58px;overflow:hidden;text-overflow:ellipsis;letter-spacing:-0.04px;text-align:right;font-size:6.3px;line-height:7.56px;color:#1c1c1c;font-weight:normal;"><span style="letter-spacing:-0.25px">29352443</span></div>
<div class="t" style="left:571.5px;top:191.62px;width:41px;overflow:hidden;text-overflow:ellipsis;letter-spacing:-0.04px;text-align:left;font-size:6.3px;line-height:7.56px;color:#1c1c1c;font-weight:normal;">Termin&eacute;e</div>
<div class="t" style="left:614.5px;top:191.62px;width:41px;overflow:hidden;text-overflow:ellipsis;letter-spacing:-0.04px;text-align:left;font-size:6.3px;line-height:7.56px;color:#1c1c1c;font-weight:normal;"><span style="letter-spacing:-0.25px">08-03-2021</span></div>
<div class="t" style="left:657px;top:191.62px;width:110px;overflow:hidden;text-overflow:ellipsis;letter-spacing:-0.04px;text-align:left;font-size:6.3px;line-height:7.56px;color:#1c1c1c;font-weight:normal;">Accompagnement multi sujets</div>
<div class="t" style="left:768.5px;top:191.62px;width:60px;overflow:hidden;text-overflow:ellipsis;letter-spacing:-0.04px;text-align:left;font-size:6.3px;line-height:7.56px;color:#1c1c1c;font-weight:normal;">L&eacute;onard <span style="letter-spacing:-0.4px">POTHERAT</span></div>
<div class="t" style="left:831px;top:191.62px;width:40px;overflow:hidden;text-overflow:ellipsis;letter-spacing:-0.04px;text-align:right;font-size:6.3px;line-height:7.56px;color:#1c1c1c;font-weight:normal;"><span style="letter-spacing:-0.25px">0.5</span></div>
<div class="t" style="left:873.5px;top:191.62px;width:61px;overflow:hidden;text-overflow:ellipsis;letter-spacing:-0.04px;text-align:left;font-size:6.3px;line-height:7.56px;color:#1c1c1c;font-weight:normal;">Support Client</div>
<div class="b" style="left:247px;top:210.17999999999998px;width:709px;height:1px;background:#ececec"></div>
<div class="t" style="left:250px;top:201.86px;width:39.5px;overflow:hidden;text-overflow:ellipsis;letter-spacing:-0.04px;text-align:right;font-size:6.3px;line-height:7.56px;color:#1c1c1c;font-weight:normal;"><span style="letter-spacing:-0.25px">25209397</span></div>
<div class="t" style="left:292px;top:201.86px;width:40.5px;overflow:hidden;text-overflow:ellipsis;letter-spacing:-0.04px;text-align:right;font-size:6.3px;line-height:7.56px;color:#1c1c1c;font-weight:normal;"><span style="letter-spacing:-0.25px">606602</span></div>
<div class="t" style="left:335px;top:201.86px;width:131px;overflow:hidden;text-overflow:ellipsis;letter-spacing:-0.04px;text-align:left;font-size:6.3px;line-height:7.56px;color:#1c1c1c;font-weight:normal;letter-spacing:-0.06px"><span style="letter-spacing:-0.4px">SALAMANDRE SSO</span></div>
<div class="t" style="left:468px;top:201.86px;width:41px;overflow:hidden;text-overflow:ellipsis;letter-spacing:-0.04px;text-align:left;font-size:6.3px;line-height:7.56px;color:#1c1c1c;font-weight:normal;">Termin&eacute;</div>
<div class="t" style="left:511px;top:201.86px;width:58px;overflow:hidden;text-overflow:ellipsis;letter-spacing:-0.04px;text-align:right;font-size:6.3px;line-height:7.56px;color:#1c1c1c;font-weight:normal;"><span style="letter-spacing:-0.25px">28322344</span></div>
<div class="t" style="left:571.5px;top:201.86px;width:41px;overflow:hidden;text-overflow:ellipsis;letter-spacing:-0.04px;text-align:left;font-size:6.3px;line-height:7.56px;color:#1c1c1c;font-weight:normal;">Termin&eacute;e</div>
<div class="t" style="left:614.5px;top:201.86px;width:41px;overflow:hidden;text-overflow:ellipsis;letter-spacing:-0.04px;text-align:left;font-size:6.3px;line-height:7.56px;color:#1c1c1c;font-weight:normal;"><span style="letter-spacing:-0.25px">19-03-2021</span></div>
<div class="t" style="left:657px;top:201.86px;width:110px;overflow:hidden;text-overflow:ellipsis;letter-spacing:-0.04px;text-align:left;font-size:6.3px;line-height:7.56px;color:#1c1c1c;font-weight:normal;">Documentation Syst&egrave;me</div>
<div class="t" style="left:768.5px;top:201.86px;width:60px;overflow:hidden;text-overflow:ellipsis;letter-spacing:-0.04px;text-align:left;font-size:6.3px;line-height:7.56px;color:#1c1c1c;font-weight:normal;">L&eacute;onard <span style="letter-spacing:-0.4px">POTHERAT</span></div>
<div class="t" style="left:831px;top:201.86px;width:40px;overflow:hidden;text-overflow:ellipsis;letter-spacing:-0.04px;text-align:right;font-size:6.3px;line-height:7.56px;color:#1c1c1c;font-weight:normal;"><span style="letter-spacing:-0.25px">3.58</span></div>
<div class="t" style="left:873.5px;top:201.86px;width:61px;overflow:hidden;text-overflow:ellipsis;letter-spacing:-0.04px;text-align:left;font-size:6.3px;line-height:7.56px;color:#1c1c1c;font-weight:normal;">Analyse, conception...</div>
<div class="b" style="left:247px;top:220.42px;width:709px;height:1px;background:#ececec"></div>
<div class="t" style="left:250px;top:212.10px;width:39.5px;overflow:hidden;text-overflow:ellipsis;letter-spacing:-0.04px;text-align:right;font-size:6.3px;line-height:7.56px;color:#1c1c1c;font-weight:normal;"><span style="letter-spacing:-0.25px">25209398</span></div>
<div class="t" style="left:292px;top:212.10px;width:40.5px;overflow:hidden;text-overflow:ellipsis;letter-spacing:-0.04px;text-align:right;font-size:6.3px;line-height:7.56px;color:#1c1c1c;font-weight:normal;"><span style="letter-spacing:-0.25px">606602</span></div>
<div class="t" style="left:335px;top:212.10px;width:131px;overflow:hidden;text-overflow:ellipsis;letter-spacing:-0.04px;text-align:left;font-size:6.3px;line-height:7.56px;color:#1c1c1c;font-weight:normal;letter-spacing:-0.06px"><span style="letter-spacing:-0.4px">SALAMANDRE SSO</span></div>
<div class="t" style="left:468px;top:212.10px;width:41px;overflow:hidden;text-overflow:ellipsis;letter-spacing:-0.04px;text-align:left;font-size:6.3px;line-height:7.56px;color:#1c1c1c;font-weight:normal;">Termin&eacute;</div>
<div class="t" style="left:511px;top:212.10px;width:58px;overflow:hidden;text-overflow:ellipsis;letter-spacing:-0.04px;text-align:right;font-size:6.3px;line-height:7.56px;color:#1c1c1c;font-weight:normal;"><span style="letter-spacing:-0.25px">28590807</span></div>
<div class="t" style="left:571.5px;top:212.10px;width:41px;overflow:hidden;text-overflow:ellipsis;letter-spacing:-0.04px;text-align:left;font-size:6.3px;line-height:7.56px;color:#1c1c1c;font-weight:normal;">Termin&eacute;e</div>
<div class="t" style="left:614.5px;top:212.10px;width:41px;overflow:hidden;text-overflow:ellipsis;letter-spacing:-0.04px;text-align:left;font-size:6.3px;line-height:7.56px;color:#1c1c1c;font-weight:normal;"><span style="letter-spacing:-0.25px">19-03-2021</span></div>
<div class="t" style="left:657px;top:212.10px;width:110px;overflow:hidden;text-overflow:ellipsis;letter-spacing:-0.04px;text-align:left;font-size:6.3px;line-height:7.56px;color:#1c1c1c;font-weight:normal;">Mise &agrave; jour</div>
<div class="t" style="left:768.5px;top:212.10px;width:60px;overflow:hidden;text-overflow:ellipsis;letter-spacing:-0.04px;text-align:left;font-size:6.3px;line-height:7.56px;color:#1c1c1c;font-weight:normal;">L&eacute;onard <span style="letter-spacing:-0.4px">POTHERAT</span></div>
<div class="t" style="left:831px;top:212.10px;width:40px;overflow:hidden;text-overflow:ellipsis;letter-spacing:-0.04px;text-align:right;font-size:6.3px;line-height:7.56px;color:#1c1c1c;font-weight:normal;"><span style="letter-spacing:-0.25px">2.08</span></div>
<div class="t" style="left:873.5px;top:212.10px;width:61px;overflow:hidden;text-overflow:ellipsis;letter-spacing:-0.04px;text-align:left;font-size:6.3px;line-height:7.56px;color:#1c1c1c;font-weight:normal;">Impl&eacute;mentation</div>
<div class="b" style="left:247px;top:230.66px;width:709px;height:1px;background:#ececec"></div>
<div class="t" style="left:250px;top:222.34px;width:39.5px;overflow:hidden;text-overflow:ellipsis;letter-spacing:-0.04px;text-align:right;font-size:6.3px;line-height:7.56px;color:#1c1c1c;font-weight:normal;"><span style="letter-spacing:-0.25px">25090774</span></div>
<div class="t" style="left:292px;top:222.34px;width:40.5px;overflow:hidden;text-overflow:ellipsis;letter-spacing:-0.04px;text-align:right;font-size:6.3px;line-height:7.56px;color:#1c1c1c;font-weight:normal;"><span style="letter-spacing:-0.25px">607172</span></div>
<div class="t" style="left:335px;top:222.34px;width:131px;overflow:hidden;text-overflow:ellipsis;letter-spacing:-0.04px;text-align:left;font-size:6.3px;line-height:7.56px;color:#1c1c1c;font-weight:normal;letter-spacing:-0.06px"><span style="letter-spacing:-0.4px">SALAMANDRE</span> - Extension base produits Bout...</div>
<div class="t" style="left:468px;top:222.34px;width:41px;overflow:hidden;text-overflow:ellipsis;letter-spacing:-0.04px;text-align:left;font-size:6.3px;line-height:7.56px;color:#1c1c1c;font-weight:normal;">Annul&eacute;</div>
<div class="t" style="left:511px;top:222.34px;width:58px;overflow:hidden;text-overflow:ellipsis;letter-spacing:-0.04px;text-align:right;font-size:6.3px;line-height:7.56px;color:#1c1c1c;font-weight:normal;"><span style="letter-spacing:-0.25px">28362939</span></div>
<div class="t" style="left:571.5px;top:222.34px;width:41px;overflow:hidden;text-overflow:ellipsis;letter-spacing:-0.04px;text-align:left;font-size:6.3px;line-height:7.56px;color:#1c1c1c;font-weight:normal;">Termin&eacute;e</div>
<div class="t" style="left:614.5px;top:222.34px;width:41px;overflow:hidden;text-overflow:ellipsis;letter-spacing:-0.04px;text-align:left;font-size:6.3px;line-height:7.56px;color:#1c1c1c;font-weight:normal;"><span style="letter-spacing:-0.25px">22-03-2021</span></div>
<div class="t" style="left:657px;top:222.34px;width:110px;overflow:hidden;text-overflow:ellipsis;letter-spacing:-0.04px;text-align:left;font-size:6.3px;line-height:7.56px;color:#1c1c1c;font-weight:normal;">Orga <span style="letter-spacing:-0.4px">DEV</span></div>
<div class="t" style="left:768.5px;top:222.34px;width:60px;overflow:hidden;text-overflow:ellipsis;letter-spacing:-0.04px;text-align:left;font-size:6.3px;line-height:7.56px;color:#1c1c1c;font-weight:normal;">Ludovic <span style="letter-spacing:-0.4px">FONTERAY</span></div>
<div class="t" style="left:831px;top:222.34px;width:40px;overflow:hidden;text-overflow:ellipsis;letter-spacing:-0.04px;text-align:right;font-size:6.3px;line-height:7.56px;color:#1c1c1c;font-weight:normal;"><span style="letter-spacing:-0.25px">2.58</span></div>
<div class="t" style="left:873.5px;top:222.34px;width:61px;overflow:hidden;text-overflow:ellipsis;letter-spacing:-0.04px;text-align:left;font-size:6.3px;line-height:7.56px;color:#1c1c1c;font-weight:normal;">Organisation <span style="letter-spacing:-0.4px">DEV</span></div>
<div class="b" style="left:247px;top:240.89999999999998px;width:709px;height:1px;background:#ececec"></div>
<div class="t" style="left:250px;top:232.58px;width:39.5px;overflow:hidden;text-overflow:ellipsis;letter-spacing:-0.04px;text-align:right;font-size:6.3px;line-height:7.56px;color:#1c1c1c;font-weight:normal;"><span style="letter-spacing:-0.25px">25091021</span></div>
<div class="t" style="left:292px;top:232.58px;width:40.5px;overflow:hidden;text-overflow:ellipsis;letter-spacing:-0.04px;text-align:right;font-size:6.3px;line-height:7.56px;color:#1c1c1c;font-weight:normal;"><span style="letter-spacing:-0.25px">607172</span></div>
<div class="t" style="left:335px;top:232.58px;width:131px;overflow:hidden;text-overflow:ellipsis;letter-spacing:-0.04px;text-align:left;font-size:6.3px;line-height:7.56px;color:#1c1c1c;font-weight:normal;letter-spacing:-0.06px"><span style="letter-spacing:-0.4px">SALAMANDRE</span> - Extension base produits Bout...</div>
<div class="t" style="left:468px;top:232.58px;width:41px;overflow:hidden;text-overflow:ellipsis;letter-spacing:-0.04px;text-align:left;font-size:6.3px;line-height:7.56px;color:#1c1c1c;font-weight:normal;">Annul&eacute;</div>
<div class="t" style="left:511px;top:232.58px;width:58px;overflow:hidden;text-overflow:ellipsis;letter-spacing:-0.04px;text-align:right;font-size:6.3px;line-height:7.56px;color:#1c1c1c;font-weight:normal;"><span style="letter-spacing:-0.25px">28362936</span></div>
<div class="t" style="left:571.5px;top:232.58px;width:41px;overflow:hidden;text-overflow:ellipsis;letter-spacing:-0.04px;text-align:left;font-size:6.3px;line-height:7.56px;color:#1c1c1c;font-weight:normal;">Termin&eacute;e</div>
<div class="t" style="left:614.5px;top:232.58px;width:41px;overflow:hidden;text-overflow:ellipsis;letter-spacing:-0.04px;text-align:left;font-size:6.3px;line-height:7.56px;color:#1c1c1c;font-weight:normal;"><span style="letter-spacing:-0.25px">22-03-2021</span></div>
<div class="t" style="left:657px;top:232.58px;width:110px;overflow:hidden;text-overflow:ellipsis;letter-spacing:-0.04px;text-align:left;font-size:6.3px;line-height:7.56px;color:#1c1c1c;font-weight:normal;">R&eacute;unions de cadrage</div>
<div class="t" style="left:768.5px;top:232.58px;width:60px;overflow:hidden;text-overflow:ellipsis;letter-spacing:-0.04px;text-align:left;font-size:6.3px;line-height:7.56px;color:#1c1c1c;font-weight:normal;">Samir <span style="letter-spacing:-0.4px">SLIMANI</span></div>
<div class="t" style="left:831px;top:232.58px;width:40px;overflow:hidden;text-overflow:ellipsis;letter-spacing:-0.04px;text-align:right;font-size:6.3px;line-height:7.56px;color:#1c1c1c;font-weight:normal;">2</div>
<div class="t" style="left:873.5px;top:232.58px;width:61px;overflow:hidden;text-overflow:ellipsis;letter-spacing:-0.04px;text-align:left;font-size:6.3px;line-height:7.56px;color:#1c1c1c;font-weight:normal;">Suivi projet et enca...</div>
<div class="b" style="left:247px;top:251.14px;width:709px;height:1px;background:#ececec"></div>
<div class="t" style="left:250px;top:242.82px;width:39.5px;overflow:hidden;text-overflow:ellipsis;letter-spacing:-0.04px;text-align:right;font-size:6.3px;line-height:7.56px;color:#1c1c1c;font-weight:normal;"><span style="letter-spacing:-0.25px">25209467</span></div>
<div class="t" style="left:292px;top:242.82px;width:40.5px;overflow:hidden;text-overflow:ellipsis;letter-spacing:-0.04px;text-align:right;font-size:6.3px;line-height:7.56px;color:#1c1c1c;font-weight:normal;"><span style="letter-spacing:-0.25px">606602</span></div>
<div class="t" style="left:335px;top:242.82px;width:131px;overflow:hidden;text-overflow:ellipsis;letter-spacing:-0.04px;text-align:left;font-size:6.3px;line-height:7.56px;color:#1c1c1c;font-weight:normal;letter-spacing:-0.06px"><span style="letter-spacing:-0.4px">SALAMANDRE SSO</span></div>
<div class="t" style="left:468px;top:242.82px;width:41px;overflow:hidden;text-overflow:ellipsis;letter-spacing:-0.04px;text-align:left;font-size:6.3px;line-height:7.56px;color:#1c1c1c;font-weight:normal;">Termin&eacute;</div>
<div class="t" style="left:511px;top:242.82px;width:58px;overflow:hidden;text-overflow:ellipsis;letter-spacing:-0.04px;text-align:right;font-size:6.3px;line-height:7.56px;color:#1c1c1c;font-weight:normal;"><span style="letter-spacing:-0.25px">28322344</span></div>
<div class="t" style="left:571.5px;top:242.82px;width:41px;overflow:hidden;text-overflow:ellipsis;letter-spacing:-0.04px;text-align:left;font-size:6.3px;line-height:7.56px;color:#1c1c1c;font-weight:normal;">Termin&eacute;e</div>
<div class="t" style="left:614.5px;top:242.82px;width:41px;overflow:hidden;text-overflow:ellipsis;letter-spacing:-0.04px;text-align:left;font-size:6.3px;line-height:7.56px;color:#1c1c1c;font-weight:normal;"><span style="letter-spacing:-0.25px">23-03-2021</span></div>
<div class="t" style="left:657px;top:242.82px;width:110px;overflow:hidden;text-overflow:ellipsis;letter-spacing:-0.04px;text-align:left;font-size:6.3px;line-height:7.56px;color:#1c1c1c;font-weight:normal;">Documentation Syst&egrave;me</div>
<div class="t" style="left:768.5px;top:242.82px;width:60px;overflow:hidden;text-overflow:ellipsis;letter-spacing:-0.04px;text-align:left;font-size:6.3px;line-height:7.56px;color:#1c1c1c;font-weight:normal;">L&eacute;onard <span style="letter-spacing:-0.4px">POTHERAT</span></div>
<div class="t" style="left:831px;top:242.82px;width:40px;overflow:hidden;text-overflow:ellipsis;letter-spacing:-0.04px;text-align:right;font-size:6.3px;line-height:7.56px;color:#1c1c1c;font-weight:normal;"><span style="letter-spacing:-0.25px">1.75</span></div>
<div class="t" style="left:873.5px;top:242.82px;width:61px;overflow:hidden;text-overflow:ellipsis;letter-spacing:-0.04px;text-align:left;font-size:6.3px;line-height:7.56px;color:#1c1c1c;font-weight:normal;">Analyse, conception...</div>
<div class="b" style="left:247px;top:261.38px;width:709px;height:1px;background:#ececec"></div>
<div class="t" style="left:250px;top:253.06px;width:39.5px;overflow:hidden;text-overflow:ellipsis;letter-spacing:-0.04px;text-align:right;font-size:6.3px;line-height:7.56px;color:#1c1c1c;font-weight:normal;"><span style="letter-spacing:-0.25px">25209469</span></div>
<div class="t" style="left:292px;top:253.06px;width:40.5px;overflow:hidden;text-overflow:ellipsis;letter-spacing:-0.04px;text-align:right;font-size:6.3px;line-height:7.56px;color:#1c1c1c;font-weight:normal;"><span style="letter-spacing:-0.25px">606602</span></div>
<div class="t" style="left:335px;top:253.06px;width:131px;overflow:hidden;text-overflow:ellipsis;letter-spacing:-0.04px;text-align:left;font-size:6.3px;line-height:7.56px;color:#1c1c1c;font-weight:normal;letter-spacing:-0.06px"><span style="letter-spacing:-0.4px">SALAMANDRE SSO</span></div>
<div class="t" style="left:468px;top:253.06px;width:41px;overflow:hidden;text-overflow:ellipsis;letter-spacing:-0.04px;text-align:left;font-size:6.3px;line-height:7.56px;color:#1c1c1c;font-weight:normal;">Termin&eacute;</div>
<div class="t" style="left:511px;top:253.06px;width:58px;overflow:hidden;text-overflow:ellipsis;letter-spacing:-0.04px;text-align:right;font-size:6.3px;line-height:7.56px;color:#1c1c1c;font-weight:normal;"><span style="letter-spacing:-0.25px">28591227</span></div>
<div class="t" style="left:571.5px;top:253.06px;width:41px;overflow:hidden;text-overflow:ellipsis;letter-spacing:-0.04px;text-align:left;font-size:6.3px;line-height:7.56px;color:#1c1c1c;font-weight:normal;">Termin&eacute;e</div>
<div class="t" style="left:614.5px;top:253.06px;width:41px;overflow:hidden;text-overflow:ellipsis;letter-spacing:-0.04px;text-align:left;font-size:6.3px;line-height:7.56px;color:#1c1c1c;font-weight:normal;"><span style="letter-spacing:-0.25px">23-03-2021</span></div>
<div class="t" style="left:657px;top:253.06px;width:110px;overflow:hidden;text-overflow:ellipsis;letter-spacing:-0.04px;text-align:left;font-size:6.3px;line-height:7.56px;color:#1c1c1c;font-weight:normal;">Outil simplifi&eacute; de gestion des clients...</div>
<div class="t" style="left:768.5px;top:253.06px;width:60px;overflow:hidden;text-overflow:ellipsis;letter-spacing:-0.04px;text-align:left;font-size:6.3px;line-height:7.56px;color:#1c1c1c;font-weight:normal;">L&eacute;onard <span style="letter-spacing:-0.4px">POTHERAT</span></div>
<div class="t" style="left:831px;top:253.06px;width:40px;overflow:hidden;text-overflow:ellipsis;letter-spacing:-0.04px;text-align:right;font-size:6.3px;line-height:7.56px;color:#1c1c1c;font-weight:normal;"><span style="letter-spacing:-0.25px">0.95</span></div>
<div class="t" style="left:873.5px;top:253.06px;width:61px;overflow:hidden;text-overflow:ellipsis;letter-spacing:-0.04px;text-align:left;font-size:6.3px;line-height:7.56px;color:#1c1c1c;font-weight:normal;">Impl&eacute;mentation</div>
<div class="b" style="left:247px;top:271.62px;width:709px;height:1px;background:#ececec"></div>
<div class="t" style="left:250px;top:263.30px;width:39.5px;overflow:hidden;text-overflow:ellipsis;letter-spacing:-0.04px;text-align:right;font-size:6.3px;line-height:7.56px;color:#1c1c1c;font-weight:normal;"><span style="letter-spacing:-0.25px">25090956</span></div>
<div class="t" style="left:292px;top:263.30px;width:40.5px;overflow:hidden;text-overflow:ellipsis;letter-spacing:-0.04px;text-align:right;font-size:6.3px;line-height:7.56px;color:#1c1c1c;font-weight:normal;"><span style="letter-spacing:-0.25px">607172</span></div>
<div class="t" style="left:335px;top:263.30px;width:131px;overflow:hidden;text-overflow:ellipsis;letter-spacing:-0.04px;text-align:left;font-size:6.3px;line-height:7.56px;color:#1c1c1c;font-weight:normal;letter-spacing:-0.06px"><span style="letter-spacing:-0.4px">SALAMANDRE</span> - Extension base produits Bout...</div>
<div class="t" style="left:468px;top:263.30px;width:41px;overflow:hidden;text-overflow:ellipsis;letter-spacing:-0.04px;text-align:left;font-size:6.3px;line-height:7.56px;color:#1c1c1c;font-weight:normal;">Annul&eacute;</div>
<div class="t" style="left:511px;top:263.30px;width:58px;overflow:hidden;text-overflow:ellipsis;letter-spacing:-0.04px;text-align:right;font-size:6.3px;line-height:7.56px;color:#1c1c1c;font-weight:normal;"><span style="letter-spacing:-0.25px">28362939</span></div>
<div class="t" style="left:571.5px;top:263.30px;width:41px;overflow:hidden;text-overflow:ellipsis;letter-spacing:-0.04px;text-align:left;font-size:6.3px;line-height:7.56px;color:#1c1c1c;font-weight:normal;">Termin&eacute;e</div>
<div class="t" style="left:614.5px;top:263.30px;width:41px;overflow:hidden;text-overflow:ellipsis;letter-spacing:-0.04px;text-align:left;font-size:6.3px;line-height:7.56px;color:#1c1c1c;font-weight:normal;"><span style="letter-spacing:-0.25px">24-03-2021</span></div>
<div class="t" style="left:657px;top:263.30px;width:110px;overflow:hidden;text-overflow:ellipsis;letter-spacing:-0.04px;text-align:left;font-size:6.3px;line-height:7.56px;color:#1c1c1c;font-weight:normal;">Orga <span style="letter-spacing:-0.4px">DEV</span></div>
<div class="t" style="left:768.5px;top:263.30px;width:60px;overflow:hidden;text-overflow:ellipsis;letter-spacing:-0.04px;text-align:left;font-size:6.3px;line-height:7.56px;color:#1c1c1c;font-weight:normal;">Ludovic <span style="letter-spacing:-0.4px">FONTERAY</span></div>
<div class="t" style="left:831px;top:263.30px;width:40px;overflow:hidden;text-overflow:ellipsis;letter-spacing:-0.04px;text-align:right;font-size:6.3px;line-height:7.56px;color:#1c1c1c;font-weight:normal;"><span style="letter-spacing:-0.25px">1.33</span></div>
<div class="t" style="left:873.5px;top:263.30px;width:61px;overflow:hidden;text-overflow:ellipsis;letter-spacing:-0.04px;text-align:left;font-size:6.3px;line-height:7.56px;color:#1c1c1c;font-weight:normal;">Organisation <span style="letter-spacing:-0.4px">DEV</span></div>
<div class="b" style="left:247px;top:281.86px;width:709px;height:1px;background:#ececec"></div>
<div class="t" style="left:250px;top:273.54px;width:39.5px;overflow:hidden;text-overflow:ellipsis;letter-spacing:-0.04px;text-align:right;font-size:6.3px;line-height:7.56px;color:#1c1c1c;font-weight:normal;"><span style="letter-spacing:-0.25px">25209480</span></div>
<div class="t" style="left:292px;top:273.54px;width:40.5px;overflow:hidden;text-overflow:ellipsis;letter-spacing:-0.04px;text-align:right;font-size:6.3px;line-height:7.56px;color:#1c1c1c;font-weight:normal;"><span style="letter-spacing:-0.25px">606602</span></div>
<div class="t" style="left:335px;top:273.54px;width:131px;overflow:hidden;text-overflow:ellipsis;letter-spacing:-0.04px;text-align:left;font-size:6.3px;line-height:7.56px;color:#1c1c1c;font-weight:normal;letter-spacing:-0.06px"><span style="letter-spacing:-0.4px">SALAMANDRE SSO</span></div>
<div class="t" style="left:468px;top:273.54px;width:41px;overflow:hidden;text-overflow:ellipsis;letter-spacing:-0.04px;text-align:left;font-size:6.3px;line-height:7.56px;color:#1c1c1c;font-weight:normal;">Termin&eacute;</div>
<div class="t" style="left:511px;top:273.54px;width:58px;overflow:hidden;text-overflow:ellipsis;letter-spacing:-0.04px;text-align:right;font-size:6.3px;line-height:7.56px;color:#1c1c1c;font-weight:normal;"><span style="letter-spacing:-0.25px">28591227</span></div>
<div class="t" style="left:571.5px;top:273.54px;width:41px;overflow:hidden;text-overflow:ellipsis;letter-spacing:-0.04px;text-align:left;font-size:6.3px;line-height:7.56px;color:#1c1c1c;font-weight:normal;">Termin&eacute;e</div>
<div class="t" style="left:614.5px;top:273.54px;width:41px;overflow:hidden;text-overflow:ellipsis;letter-spacing:-0.04px;text-align:left;font-size:6.3px;line-height:7.56px;color:#1c1c1c;font-weight:normal;"><span style="letter-spacing:-0.25px">24-03-2021</span></div>
<div class="t" style="left:657px;top:273.54px;width:110px;overflow:hidden;text-overflow:ellipsis;letter-spacing:-0.04px;text-align:left;font-size:6.3px;line-height:7.56px;color:#1c1c1c;font-weight:normal;">Outil simplifi&eacute; de gestion des clients...</div>
<div class="t" style="left:768.5px;top:273.54px;width:60px;overflow:hidden;text-overflow:ellipsis;letter-spacing:-0.04px;text-align:left;font-size:6.3px;line-height:7.56px;color:#1c1c1c;font-weight:normal;">L&eacute;onard <span style="letter-spacing:-0.4px">POTHERAT</span></div>
<div class="t" style="left:831px;top:273.54px;width:40px;overflow:hidden;text-overflow:ellipsis;letter-spacing:-0.04px;text-align:right;font-size:6.3px;line-height:7.56px;color:#1c1c1c;font-weight:normal;"><span style="letter-spacing:-0.25px">2.6</span></div>
<div class="t" style="left:873.5px;top:273.54px;width:61px;overflow:hidden;text-overflow:ellipsis;letter-spacing:-0.04px;text-align:left;font-size:6.3px;line-height:7.56px;color:#1c1c1c;font-weight:normal;">Impl&eacute;mentation</div>
<div class="b" style="left:247px;top:292.1px;width:709px;height:1px;background:#ececec"></div>
<div class="t" style="left:250px;top:283.78px;width:39.5px;overflow:hidden;text-overflow:ellipsis;letter-spacing:-0.04px;text-align:right;font-size:6.3px;line-height:7.56px;color:#1c1c1c;font-weight:normal;"><span style="letter-spacing:-0.25px">25209468</span></div>
<div class="t" style="left:292px;top:283.78px;width:40.5px;overflow:hidden;text-overflow:ellipsis;letter-spacing:-0.04px;text-align:right;font-size:6.3px;line-height:7.56px;color:#1c1c1c;font-weight:normal;"><span style="letter-spacing:-0.25px">606602</span></div>
<div class="t" style="left:335px;top:283.78px;width:131px;overflow:hidden;text-overflow:ellipsis;letter-spacing:-0.04px;text-align:left;font-size:6.3px;line-height:7.56px;color:#1c1c1c;font-weight:normal;letter-spacing:-0.06px"><span style="letter-spacing:-0.4px">SALAMANDRE SSO</span></div>
<div class="t" style="left:468px;top:283.78px;width:41px;overflow:hidden;text-overflow:ellipsis;letter-spacing:-0.04px;text-align:left;font-size:6.3px;line-height:7.56px;color:#1c1c1c;font-weight:normal;">Termin&eacute;</div>
<div class="t" style="left:511px;top:283.78px;width:58px;overflow:hidden;text-overflow:ellipsis;letter-spacing:-0.04px;text-align:right;font-size:6.3px;line-height:7.56px;color:#1c1c1c;font-weight:normal;"><span style="letter-spacing:-0.25px">28322339</span></div>
<div class="t" style="left:571.5px;top:283.78px;width:41px;overflow:hidden;text-overflow:ellipsis;letter-spacing:-0.04px;text-align:left;font-size:6.3px;line-height:7.56px;color:#1c1c1c;font-weight:normal;">Termin&eacute;e</div>
<div class="t" style="left:614.5px;top:283.78px;width:41px;overflow:hidden;text-overflow:ellipsis;letter-spacing:-0.04px;text-align:left;font-size:6.3px;line-height:7.56px;color:#1c1c1c;font-weight:normal;"><span style="letter-spacing:-0.25px">24-03-2021</span></div>
<div class="t" style="left:657px;top:283.78px;width:110px;overflow:hidden;text-overflow:ellipsis;letter-spacing:-0.04px;text-align:left;font-size:6.3px;line-height:7.56px;color:#1c1c1c;font-weight:normal;">Organisation <span style="letter-spacing:-0.4px">DEV</span></div>
<div class="t" style="left:768.5px;top:283.78px;width:60px;overflow:hidden;text-overflow:ellipsis;letter-spacing:-0.04px;text-align:left;font-size:6.3px;line-height:7.56px;color:#1c1c1c;font-weight:normal;">L&eacute;onard <span style="letter-spacing:-0.4px">POTHERAT</span></div>
<div class="t" style="left:831px;top:283.78px;width:40px;overflow:hidden;text-overflow:ellipsis;letter-spacing:-0.04px;text-align:right;font-size:6.3px;line-height:7.56px;color:#1c1c1c;font-weight:normal;"><span style="letter-spacing:-0.25px">0.92</span></div>
<div class="t" style="left:873.5px;top:283.78px;width:61px;overflow:hidden;text-overflow:ellipsis;letter-spacing:-0.04px;text-align:left;font-size:6.3px;line-height:7.56px;color:#1c1c1c;font-weight:normal;">Organisation <span style="letter-spacing:-0.4px">DEV</span></div>
<div class="b" style="left:247px;top:302.34px;width:709px;height:1px;background:#ececec"></div>
<div class="t" style="left:250px;top:294.02px;width:39.5px;overflow:hidden;text-overflow:ellipsis;letter-spacing:-0.04px;text-align:right;font-size:6.3px;line-height:7.56px;color:#1c1c1c;font-weight:normal;"><span style="letter-spacing:-0.25px">25013748</span></div>
<div class="t" style="left:292px;top:294.02px;width:40.5px;overflow:hidden;text-overflow:ellipsis;letter-spacing:-0.04px;text-align:right;font-size:6.3px;line-height:7.56px;color:#1c1c1c;font-weight:normal;"><span style="letter-spacing:-0.25px">607172</span></div>
<div class="t" style="left:335px;top:294.02px;width:131px;overflow:hidden;text-overflow:ellipsis;letter-spacing:-0.04px;text-align:left;font-size:6.3px;line-height:7.56px;color:#1c1c1c;font-weight:normal;letter-spacing:-0.06px"><span style="letter-spacing:-0.4px">SALAMANDRE</span> - Extension base produits Bout...</div>
<div class="t" style="left:468px;top:294.02px;width:41px;overflow:hidden;text-overflow:ellipsis;letter-spacing:-0.04px;text-align:left;font-size:6.3px;line-height:7.56px;color:#1c1c1c;font-weight:normal;">Annul&eacute;</div>
<div class="t" style="left:511px;top:294.02px;width:58px;overflow:hidden;text-overflow:ellipsis;letter-spacing:-0.04px;text-align:right;font-size:6.3px;line-height:7.56px;color:#1c1c1c;font-weight:normal;"><span style="letter-spacing:-0.25px">28362939</span></div>
<div class="t" style="left:571.5px;top:294.02px;width:41px;overflow:hidden;text-overflow:ellipsis;letter-spacing:-0.04px;text-align:left;font-size:6.3px;line-height:7.56px;color:#1c1c1c;font-weight:normal;">Termin&eacute;e</div>
<div class="t" style="left:614.5px;top:294.02px;width:41px;overflow:hidden;text-overflow:ellipsis;letter-spacing:-0.04px;text-align:left;font-size:6.3px;line-height:7.56px;color:#1c1c1c;font-weight:normal;"><span style="letter-spacing:-0.25px">25-03-2021</span></div>
<div class="t" style="left:657px;top:294.02px;width:110px;overflow:hidden;text-overflow:ellipsis;letter-spacing:-0.04px;text-align:left;font-size:6.3px;line-height:7.56px;color:#1c1c1c;font-weight:normal;">Orga <span style="letter-spacing:-0.4px">DEV</span></div>
<div class="t" style="left:768.5px;top:294.02px;width:60px;overflow:hidden;text-overflow:ellipsis;letter-spacing:-0.04px;text-align:left;font-size:6.3px;line-height:7.56px;color:#1c1c1c;font-weight:normal;">Aur&eacute;lie <span style="letter-spacing:-0.4px">MARATRAY</span></div>
<div class="t" style="left:831px;top:294.02px;width:40px;overflow:hidden;text-overflow:ellipsis;letter-spacing:-0.04px;text-align:right;font-size:6.3px;line-height:7.56px;color:#1c1c1c;font-weight:normal;"><span style="letter-spacing:-0.25px">1.47</span></div>
<div class="t" style="left:873.5px;top:294.02px;width:61px;overflow:hidden;text-overflow:ellipsis;letter-spacing:-0.04px;text-align:left;font-size:6.3px;line-height:7.56px;color:#1c1c1c;font-weight:normal;">Organisation <span style="letter-spacing:-0.4px">DEV</span></div>
<div class="b" style="left:247px;top:312.58px;width:709px;height:1px;background:#ececec"></div>
<div class="t" style="left:250px;top:304.26px;width:39.5px;overflow:hidden;text-overflow:ellipsis;letter-spacing:-0.04px;text-align:right;font-size:6.3px;line-height:7.56px;color:#1c1c1c;font-weight:normal;"><span style="letter-spacing:-0.25px">25090957</span></div>
<div class="t" style="left:292px;top:304.26px;width:40.5px;overflow:hidden;text-overflow:ellipsis;letter-spacing:-0.04px;text-align:right;font-size:6.3px;line-height:7.56px;color:#1c1c1c;font-weight:normal;"><span style="letter-spacing:-0.25px">607172</span></div>
<div class="t" style="left:335px;top:304.26px;width:131px;overflow:hidden;text-overflow:ellipsis;letter-spacing:-0.04px;text-align:left;font-size:6.3px;line-height:7.56px;color:#1c1c1c;font-weight:normal;letter-spacing:-0.06px"><span style="letter-spacing:-0.4px">SALAMANDRE</span> - Extension base produits Bout...</div>
<div class="t" style="left:468px;top:304.26px;width:41px;overflow:hidden;text-overflow:ellipsis;letter-spacing:-0.04px;text-align:left;font-size:6.3px;line-height:7.56px;color:#1c1c1c;font-weight:normal;">Annul&eacute;</div>
<div class="t" style="left:511px;top:304.26px;width:58px;overflow:hidden;text-overflow:ellipsis;letter-spacing:-0.04px;text-align:right;font-size:6.3px;line-height:7.56px;color:#1c1c1c;font-weight:normal;"><span style="letter-spacing:-0.25px">28362939</span></div>
<div class="t" style="left:571.5px;top:304.26px;width:41px;overflow:hidden;text-overflow:ellipsis;letter-spacing:-0.04px;text-align:left;font-size:6.3px;line-height:7.56px;color:#1c1c1c;font-weight:normal;">Termin&eacute;e</div>
<div class="t" style="left:614.5px;top:304.26px;width:41px;overflow:hidden;text-overflow:ellipsis;letter-spacing:-0.04px;text-align:left;font-size:6.3px;line-height:7.56px;color:#1c1c1c;font-weight:normal;"><span style="letter-spacing:-0.25px">25-03-2021</span></div>
<div class="t" style="left:657px;top:304.26px;width:110px;overflow:hidden;text-overflow:ellipsis;letter-spacing:-0.04px;text-align:left;font-size:6.3px;line-height:7.56px;color:#1c1c1c;font-weight:normal;">Orga <span style="letter-spacing:-0.4px">DEV</span></div>
<div class="t" style="left:768.5px;top:304.26px;width:60px;overflow:hidden;text-overflow:ellipsis;letter-spacing:-0.04px;text-align:left;font-size:6.3px;line-height:7.56px;color:#1c1c1c;font-weight:normal;">Ludovic <span style="letter-spacing:-0.4px">FONTERAY</span></div>
<div class="t" style="left:831px;top:304.26px;width:40px;overflow:hidden;text-overflow:ellipsis;letter-spacing:-0.04px;text-align:right;font-size:6.3px;line-height:7.56px;color:#1c1c1c;font-weight:normal;"><span style="letter-spacing:-0.25px">2.08</span></div>
<div class="t" style="left:873.5px;top:304.26px;width:61px;overflow:hidden;text-overflow:ellipsis;letter-spacing:-0.04px;text-align:left;font-size:6.3px;line-height:7.56px;color:#1c1c1c;font-weight:normal;">Organisation <span style="letter-spacing:-0.4px">DEV</span></div>
<div class="b" style="left:247px;top:322.82px;width:709px;height:1px;background:#ececec"></div>
<div class="t" style="left:250px;top:314.50px;width:39.5px;overflow:hidden;text-overflow:ellipsis;letter-spacing:-0.04px;text-align:right;font-size:6.3px;line-height:7.56px;color:#1c1c1c;font-weight:normal;"><span style="letter-spacing:-0.25px">25091159</span></div>
<div class="t" style="left:292px;top:314.50px;width:40.5px;overflow:hidden;text-overflow:ellipsis;letter-spacing:-0.04px;text-align:right;font-size:6.3px;line-height:7.56px;color:#1c1c1c;font-weight:normal;"><span style="letter-spacing:-0.25px">607172</span></div>
<div class="t" style="left:335px;top:314.50px;width:131px;overflow:hidden;text-overflow:ellipsis;letter-spacing:-0.04px;text-align:left;font-size:6.3px;line-height:7.56px;color:#1c1c1c;font-weight:normal;letter-spacing:-0.06px"><span style="letter-spacing:-0.4px">SALAMANDRE</span> - Extension base produits Bout...</div>
<div class="t" style="left:468px;top:314.50px;width:41px;overflow:hidden;text-overflow:ellipsis;letter-spacing:-0.04px;text-align:left;font-size:6.3px;line-height:7.56px;color:#1c1c1c;font-weight:normal;">Annul&eacute;</div>
<div class="t" style="left:511px;top:314.50px;width:58px;overflow:hidden;text-overflow:ellipsis;letter-spacing:-0.04px;text-align:right;font-size:6.3px;line-height:7.56px;color:#1c1c1c;font-weight:normal;"><span style="letter-spacing:-0.25px">28362939</span></div>
<div class="t" style="left:571.5px;top:314.50px;width:41px;overflow:hidden;text-overflow:ellipsis;letter-spacing:-0.04px;text-align:left;font-size:6.3px;line-height:7.56px;color:#1c1c1c;font-weight:normal;">Termin&eacute;e</div>
<div class="t" style="left:614.5px;top:314.50px;width:41px;overflow:hidden;text-overflow:ellipsis;letter-spacing:-0.04px;text-align:left;font-size:6.3px;line-height:7.56px;color:#1c1c1c;font-weight:normal;"><span style="letter-spacing:-0.25px">29-03-2021</span></div>
<div class="t" style="left:657px;top:314.50px;width:110px;overflow:hidden;text-overflow:ellipsis;letter-spacing:-0.04px;text-align:left;font-size:6.3px;line-height:7.56px;color:#1c1c1c;font-weight:normal;">Orga <span style="letter-spacing:-0.4px">DEV</span></div>
<div class="t" style="left:768.5px;top:314.50px;width:60px;overflow:hidden;text-overflow:ellipsis;letter-spacing:-0.04px;text-align:left;font-size:6.3px;line-height:7.56px;color:#1c1c1c;font-weight:normal;">Ludovic <span style="letter-spacing:-0.4px">FONTERAY</span></div>
<div class="t" style="left:831px;top:314.50px;width:40px;overflow:hidden;text-overflow:ellipsis;letter-spacing:-0.04px;text-align:right;font-size:6.3px;line-height:7.56px;color:#1c1c1c;font-weight:normal;"><span style="letter-spacing:-0.25px">0.67</span></div>
<div class="t" style="left:873.5px;top:314.50px;width:61px;overflow:hidden;text-overflow:ellipsis;letter-spacing:-0.04px;text-align:left;font-size:6.3px;line-height:7.56px;color:#1c1c1c;font-weight:normal;">Organisation <span style="letter-spacing:-0.4px">DEV</span></div>
<div class="b" style="left:247px;top:333.06px;width:709px;height:1px;background:#ececec"></div>
<div class="t" style="left:250px;top:324.74px;width:39.5px;overflow:hidden;text-overflow:ellipsis;letter-spacing:-0.04px;text-align:right;font-size:6.3px;line-height:7.56px;color:#1c1c1c;font-weight:normal;"><span style="letter-spacing:-0.25px">25054972</span></div>
<div class="t" style="left:292px;top:324.74px;width:40.5px;overflow:hidden;text-overflow:ellipsis;letter-spacing:-0.04px;text-align:right;font-size:6.3px;line-height:7.56px;color:#1c1c1c;font-weight:normal;"><span style="letter-spacing:-0.25px">607172</span></div>
<div class="t" style="left:335px;top:324.74px;width:131px;overflow:hidden;text-overflow:ellipsis;letter-spacing:-0.04px;text-align:left;font-size:6.3px;line-height:7.56px;color:#1c1c1c;font-weight:normal;letter-spacing:-0.06px"><span style="letter-spacing:-0.4px">SALAMANDRE</span> - Extension base produits Bout...</div>
<div class="t" style="left:468px;top:324.74px;width:41px;overflow:hidden;text-overflow:ellipsis;letter-spacing:-0.04px;text-align:left;font-size:6.3px;line-height:7.56px;color:#1c1c1c;font-weight:normal;">Annul&eacute;</div>
<div class="t" style="left:511px;top:324.74px;width:58px;overflow:hidden;text-overflow:ellipsis;letter-spacing:-0.04px;text-align:right;font-size:6.3px;line-height:7.56px;color:#1c1c1c;font-weight:normal;"><span style="letter-spacing:-0.25px">28362936</span></div>
<div class="t" style="left:571.5px;top:324.74px;width:41px;overflow:hidden;text-overflow:ellipsis;letter-spacing:-0.04px;text-align:left;font-size:6.3px;line-height:7.56px;color:#1c1c1c;font-weight:normal;">Termin&eacute;e</div>
<div class="t" style="left:614.5px;top:324.74px;width:41px;overflow:hidden;text-overflow:ellipsis;letter-spacing:-0.04px;text-align:left;font-size:6.3px;line-height:7.56px;color:#1c1c1c;font-weight:normal;"><span style="letter-spacing:-0.25px">29-03-2021</span></div>
<div class="t" style="left:657px;top:324.74px;width:110px;overflow:hidden;text-overflow:ellipsis;letter-spacing:-0.04px;text-align:left;font-size:6.3px;line-height:7.56px;color:#1c1c1c;font-weight:normal;">R&eacute;unions de cadrage</div>
<div class="t" style="left:768.5px;top:324.74px;width:60px;overflow:hidden;text-overflow:ellipsis;letter-spacing:-0.04px;text-align:left;font-size:6.3px;line-height:7.56px;color:#1c1c1c;font-weight:normal;">Aur&eacute;lie <span style="letter-spacing:-0.4px">MARATRAY</span></div>
<div class="t" style="left:831px;top:324.74px;width:40px;overflow:hidden;text-overflow:ellipsis;letter-spacing:-0.04px;text-align:right;font-size:6.3px;line-height:7.56px;color:#1c1c1c;font-weight:normal;"><span style="letter-spacing:-0.25px">1.45</span></div>
<div class="t" style="left:873.5px;top:324.74px;width:61px;overflow:hidden;text-overflow:ellipsis;letter-spacing:-0.04px;text-align:left;font-size:6.3px;line-height:7.56px;color:#1c1c1c;font-weight:normal;">Suivi projet et enca...</div>
<div class="b" style="left:247px;top:343.29999999999995px;width:709px;height:1px;background:#ececec"></div>
<div class="t" style="left:250px;top:334.98px;width:39.5px;overflow:hidden;text-overflow:ellipsis;letter-spacing:-0.04px;text-align:right;font-size:6.3px;line-height:7.56px;color:#1c1c1c;font-weight:normal;"><span style="letter-spacing:-0.25px">25091163</span></div>
<div class="t" style="left:292px;top:334.98px;width:40.5px;overflow:hidden;text-overflow:ellipsis;letter-spacing:-0.04px;text-align:right;font-size:6.3px;line-height:7.56px;color:#1c1c1c;font-weight:normal;"><span style="letter-spacing:-0.25px">607172</span></div>
<div class="t" style="left:335px;top:334.98px;width:131px;overflow:hidden;text-overflow:ellipsis;letter-spacing:-0.04px;text-align:left;font-size:6.3px;line-height:7.56px;color:#1c1c1c;font-weight:normal;letter-spacing:-0.06px"><span style="letter-spacing:-0.4px">SALAMANDRE</span> - Extension base produits Bout...</div>
<div class="t" style="left:468px;top:334.98px;width:41px;overflow:hidden;text-overflow:ellipsis;letter-spacing:-0.04px;text-align:left;font-size:6.3px;line-height:7.56px;color:#1c1c1c;font-weight:normal;">Annul&eacute;</div>
<div class="t" style="left:511px;top:334.98px;width:58px;overflow:hidden;text-overflow:ellipsis;letter-spacing:-0.04px;text-align:right;font-size:6.3px;line-height:7.56px;color:#1c1c1c;font-weight:normal;"><span style="letter-spacing:-0.25px">28362936</span></div>
<div class="t" style="left:571.5px;top:334.98px;width:41px;overflow:hidden;text-overflow:ellipsis;letter-spacing:-0.04px;text-align:left;font-size:6.3px;line-height:7.56px;color:#1c1c1c;font-weight:normal;">Termin&eacute;e</div>
<div class="t" style="left:614.5px;top:334.98px;width:41px;overflow:hidden;text-overflow:ellipsis;letter-spacing:-0.04px;text-align:left;font-size:6.3px;line-height:7.56px;color:#1c1c1c;font-weight:normal;"><span style="letter-spacing:-0.25px">29-03-2021</span></div>
<div class="t" style="left:657px;top:334.98px;width:110px;overflow:hidden;text-overflow:ellipsis;letter-spacing:-0.04px;text-align:left;font-size:6.3px;line-height:7.56px;color:#1c1c1c;font-weight:normal;">R&eacute;unions de cadrage</div>
<div class="t" style="left:768.5px;top:334.98px;width:60px;overflow:hidden;text-overflow:ellipsis;letter-spacing:-0.04px;text-align:left;font-size:6.3px;line-height:7.56px;color:#1c1c1c;font-weight:normal;">Ludovic <span style="letter-spacing:-0.4px">FONTERAY</span></div>
<div class="t" style="left:831px;top:334.98px;width:40px;overflow:hidden;text-overflow:ellipsis;letter-spacing:-0.04px;text-align:right;font-size:6.3px;line-height:7.56px;color:#1c1c1c;font-weight:normal;"><span style="letter-spacing:-0.25px">1.45</span></div>
<div class="t" style="left:873.5px;top:334.98px;width:61px;overflow:hidden;text-overflow:ellipsis;letter-spacing:-0.04px;text-align:left;font-size:6.3px;line-height:7.56px;color:#1c1c1c;font-weight:normal;">Suivi projet et enca...</div>
<div class="b" style="left:247px;top:353.53999999999996px;width:709px;height:1px;background:#ececec"></div>
<div class="t" style="left:250px;top:345.22px;width:39.5px;overflow:hidden;text-overflow:ellipsis;letter-spacing:-0.04px;text-align:right;font-size:6.3px;line-height:7.56px;color:#1c1c1c;font-weight:normal;"><span style="letter-spacing:-0.25px">25105862</span></div>
<div class="t" style="left:292px;top:345.22px;width:40.5px;overflow:hidden;text-overflow:ellipsis;letter-spacing:-0.04px;text-align:right;font-size:6.3px;line-height:7.56px;color:#1c1c1c;font-weight:normal;"><span style="letter-spacing:-0.25px">607172</span></div>
<div class="t" style="left:335px;top:345.22px;width:131px;overflow:hidden;text-overflow:ellipsis;letter-spacing:-0.04px;text-align:left;font-size:6.3px;line-height:7.56px;color:#1c1c1c;font-weight:normal;letter-spacing:-0.06px"><span style="letter-spacing:-0.4px">SALAMANDRE</span> - Extension base produits Bout...</div>
<div class="t" style="left:468px;top:345.22px;width:41px;overflow:hidden;text-overflow:ellipsis;letter-spacing:-0.04px;text-align:left;font-size:6.3px;line-height:7.56px;color:#1c1c1c;font-weight:normal;">Annul&eacute;</div>
<div class="t" style="left:511px;top:345.22px;width:58px;overflow:hidden;text-overflow:ellipsis;letter-spacing:-0.04px;text-align:right;font-size:6.3px;line-height:7.56px;color:#1c1c1c;font-weight:normal;"><span style="letter-spacing:-0.25px">28362936</span></div>
<div class="t" style="left:571.5px;top:345.22px;width:41px;overflow:hidden;text-overflow:ellipsis;letter-spacing:-0.04px;text-align:left;font-size:6.3px;line-height:7.56px;color:#1c1c1c;font-weight:normal;">Termin&eacute;e</div>
<div class="t" style="left:614.5px;top:345.22px;width:41px;overflow:hidden;text-overflow:ellipsis;letter-spacing:-0.04px;text-align:left;font-size:6.3px;line-height:7.56px;color:#1c1c1c;font-weight:normal;"><span style="letter-spacing:-0.25px">29-03-2021</span></div>
<div class="t" style="left:657px;top:345.22px;width:110px;overflow:hidden;text-overflow:ellipsis;letter-spacing:-0.04px;text-align:left;font-size:6.3px;line-height:7.56px;color:#1c1c1c;font-weight:normal;">R&eacute;unions de cadrage</div>
<div class="t" style="left:768.5px;top:345.22px;width:60px;overflow:hidden;text-overflow:ellipsis;letter-spacing:-0.04px;text-align:left;font-size:6.3px;line-height:7.56px;color:#1c1c1c;font-weight:normal;">Benoit <span style="letter-spacing:-0.4px">AUDOIN</span></div>
<div class="t" style="left:831px;top:345.22px;width:40px;overflow:hidden;text-overflow:ellipsis;letter-spacing:-0.04px;text-align:right;font-size:6.3px;line-height:7.56px;color:#1c1c1c;font-weight:normal;"><span style="letter-spacing:-0.25px">1.45</span></div>
<div class="t" style="left:873.5px;top:345.22px;width:61px;overflow:hidden;text-overflow:ellipsis;letter-spacing:-0.04px;text-align:left;font-size:6.3px;line-height:7.56px;color:#1c1c1c;font-weight:normal;">Suivi projet et enca...</div>
<div class="b" style="left:247px;top:363.78px;width:709px;height:1px;background:#ececec"></div>
<div class="t" style="left:250px;top:355.46px;width:39.5px;overflow:hidden;text-overflow:ellipsis;letter-spacing:-0.04px;text-align:right;font-size:6.3px;line-height:7.56px;color:#1c1c1c;font-weight:normal;"><span style="letter-spacing:-0.25px">25091162</span></div>
<div class="t" style="left:292px;top:355.46px;width:40.5px;overflow:hidden;text-overflow:ellipsis;letter-spacing:-0.04px;text-align:right;font-size:6.3px;line-height:7.56px;color:#1c1c1c;font-weight:normal;"><span style="letter-spacing:-0.25px">607172</span></div>
<div class="t" style="left:335px;top:355.46px;width:131px;overflow:hidden;text-overflow:ellipsis;letter-spacing:-0.04px;text-align:left;font-size:6.3px;line-height:7.56px;color:#1c1c1c;font-weight:normal;letter-spacing:-0.06px"><span style="letter-spacing:-0.4px">SALAMANDRE</span> - Extension base produits Bout...</div>
<div class="t" style="left:468px;top:355.46px;width:41px;overflow:hidden;text-overflow:ellipsis;letter-spacing:-0.04px;text-align:left;font-size:6.3px;line-height:7.56px;color:#1c1c1c;font-weight:normal;">Annul&eacute;</div>
<div class="t" style="left:511px;top:355.46px;width:58px;overflow:hidden;text-overflow:ellipsis;letter-spacing:-0.04px;text-align:right;font-size:6.3px;line-height:7.56px;color:#1c1c1c;font-weight:normal;"><span style="letter-spacing:-0.25px">28474503</span></div>
<div class="t" style="left:571.5px;top:355.46px;width:41px;overflow:hidden;text-overflow:ellipsis;letter-spacing:-0.04px;text-align:left;font-size:6.3px;line-height:7.56px;color:#1c1c1c;font-weight:normal;">Termin&eacute;e</div>
<div class="t" style="left:614.5px;top:355.46px;width:41px;overflow:hidden;text-overflow:ellipsis;letter-spacing:-0.04px;text-align:left;font-size:6.3px;line-height:7.56px;color:#1c1c1c;font-weight:normal;"><span style="letter-spacing:-0.25px">30-03-2021</span></div>
<div class="t" style="left:657px;top:355.46px;width:110px;overflow:hidden;text-overflow:ellipsis;letter-spacing:-0.04px;text-align:left;font-size:6.3px;line-height:7.56px;color:#1c1c1c;font-weight:normal;">Pr&eacute;paration module test</div>
<div class="t" style="left:768.5px;top:355.46px;width:60px;overflow:hidden;text-overflow:ellipsis;letter-spacing:-0.04px;text-align:left;font-size:6.3px;line-height:7.56px;color:#1c1c1c;font-weight:normal;">Ludovic <span style="letter-spacing:-0.4px">FONTERAY</span></div>
<div class="t" style="left:831px;top:355.46px;width:40px;overflow:hidden;text-overflow:ellipsis;letter-spacing:-0.04px;text-align:right;font-size:6.3px;line-height:7.56px;color:#1c1c1c;font-weight:normal;"><span style="letter-spacing:-0.25px">0.5</span></div>
<div class="t" style="left:873.5px;top:355.46px;width:61px;overflow:hidden;text-overflow:ellipsis;letter-spacing:-0.04px;text-align:left;font-size:6.3px;line-height:7.56px;color:#1c1c1c;font-weight:normal;">Impl&eacute;mentation</div>
<div class="b" style="left:247px;top:374.02px;width:709px;height:1px;background:#ececec"></div>
<div class="t" style="left:250px;top:365.70px;width:39.5px;overflow:hidden;text-overflow:ellipsis;letter-spacing:-0.04px;text-align:right;font-size:6.3px;line-height:7.56px;color:#1c1c1c;font-weight:normal;"><span style="letter-spacing:-0.25px">25108045</span></div>
<div class="t" style="left:292px;top:365.70px;width:40.5px;overflow:hidden;text-overflow:ellipsis;letter-spacing:-0.04px;text-align:right;font-size:6.3px;line-height:7.56px;color:#1c1c1c;font-weight:normal;"><span style="letter-spacing:-0.25px">607172</span></div>
<div class="t" style="left:335px;top:365.70px;width:131px;overflow:hidden;text-overflow:ellipsis;letter-spacing:-0.04px;text-align:left;font-size:6.3px;line-height:7.56px;color:#1c1c1c;font-weight:normal;letter-spacing:-0.06px"><span style="letter-spacing:-0.4px">SALAMANDRE</span> - Extension base produits Bout...</div>
<div class="t" style="left:468px;top:365.70px;width:41px;overflow:hidden;text-overflow:ellipsis;letter-spacing:-0.04px;text-align:left;font-size:6.3px;line-height:7.56px;color:#1c1c1c;font-weight:normal;">Annul&eacute;</div>
<div class="t" style="left:511px;top:365.70px;width:58px;overflow:hidden;text-overflow:ellipsis;letter-spacing:-0.04px;text-align:right;font-size:6.3px;line-height:7.56px;color:#1c1c1c;font-weight:normal;"><span style="letter-spacing:-0.25px">28474500</span></div>
<div class="t" style="left:571.5px;top:365.70px;width:41px;overflow:hidden;text-overflow:ellipsis;letter-spacing:-0.04px;text-align:left;font-size:6.3px;line-height:7.56px;color:#1c1c1c;font-weight:normal;">Termin&eacute;e</div>
<div class="t" style="left:614.5px;top:365.70px;width:41px;overflow:hidden;text-overflow:ellipsis;letter-spacing:-0.04px;text-align:left;font-size:6.3px;line-height:7.56px;color:#1c1c1c;font-weight:normal;"><span style="letter-spacing:-0.25px">30-03-2021</span></div>
<div class="t" style="left:657px;top:365.70px;width:110px;overflow:hidden;text-overflow:ellipsis;letter-spacing:-0.04px;text-align:left;font-size:6.3px;line-height:7.56px;color:#1c1c1c;font-weight:normal;">Gitisation projet</div>
<div class="t" style="left:768.5px;top:365.70px;width:60px;overflow:hidden;text-overflow:ellipsis;letter-spacing:-0.04px;text-align:left;font-size:6.3px;line-height:7.56px;color:#1c1c1c;font-weight:normal;">Benoit <span style="letter-spacing:-0.4px">AUDOIN</span></div>
<div class="t" style="left:831px;top:365.70px;width:40px;overflow:hidden;text-overflow:ellipsis;letter-spacing:-0.04px;text-align:right;font-size:6.3px;line-height:7.56px;color:#1c1c1c;font-weight:normal;">1</div>
<div class="t" style="left:873.5px;top:365.70px;width:61px;overflow:hidden;text-overflow:ellipsis;letter-spacing:-0.04px;text-align:left;font-size:6.3px;line-height:7.56px;color:#1c1c1c;font-weight:normal;">Impl&eacute;mentation</div>
<div class="b" style="left:247px;top:384.26px;width:709px;height:1px;background:#ececec"></div>
<div class="t" style="left:250px;top:375.94px;width:39.5px;overflow:hidden;text-overflow:ellipsis;letter-spacing:-0.04px;text-align:right;font-size:6.3px;line-height:7.56px;color:#1c1c1c;font-weight:normal;"><span style="letter-spacing:-0.25px">25273660</span></div>
<div class="t" style="left:292px;top:375.94px;width:40.5px;overflow:hidden;text-overflow:ellipsis;letter-spacing:-0.04px;text-align:right;font-size:6.3px;line-height:7.56px;color:#1c1c1c;font-weight:normal;"><span style="letter-spacing:-0.25px">607172</span></div>
<div class="t" style="left:335px;top:375.94px;width:131px;overflow:hidden;text-overflow:ellipsis;letter-spacing:-0.04px;text-align:left;font-size:6.3px;line-height:7.56px;color:#1c1c1c;font-weight:normal;letter-spacing:-0.06px"><span style="letter-spacing:-0.4px">SALAMANDRE</span> - Extension base produits Bout...</div>
<div class="t" style="left:468px;top:375.94px;width:41px;overflow:hidden;text-overflow:ellipsis;letter-spacing:-0.04px;text-align:left;font-size:6.3px;line-height:7.56px;color:#1c1c1c;font-weight:normal;">Annul&eacute;</div>
<div class="t" style="left:511px;top:375.94px;width:58px;overflow:hidden;text-overflow:ellipsis;letter-spacing:-0.04px;text-align:right;font-size:6.3px;line-height:7.56px;color:#1c1c1c;font-weight:normal;"><span style="letter-spacing:-0.25px">28362942</span></div>
<div class="t" style="left:571.5px;top:375.94px;width:41px;overflow:hidden;text-overflow:ellipsis;letter-spacing:-0.04px;text-align:left;font-size:6.3px;line-height:7.56px;color:#1c1c1c;font-weight:normal;">Termin&eacute;e</div>
<div class="t" style="left:614.5px;top:375.94px;width:41px;overflow:hidden;text-overflow:ellipsis;letter-spacing:-0.04px;text-align:left;font-size:6.3px;line-height:7.56px;color:#1c1c1c;font-weight:normal;"><span style="letter-spacing:-0.25px">30-03-2021</span></div>
<div class="t" style="left:657px;top:375.94px;width:110px;overflow:hidden;text-overflow:ellipsis;letter-spacing:-0.04px;text-align:left;font-size:6.3px;line-height:7.56px;color:#1c1c1c;font-weight:normal;">Sp&eacute;cifications d&eacute;taill&eacute;es</div>
<div class="t" style="left:768.5px;top:375.94px;width:60px;overflow:hidden;text-overflow:ellipsis;letter-spacing:-0.04px;text-align:left;font-size:6.3px;line-height:7.56px;color:#1c1c1c;font-weight:normal;">Ludovic <span style="letter-spacing:-0.4px">FONTERAY</span></div>
<div class="t" style="left:831px;top:375.94px;width:40px;overflow:hidden;text-overflow:ellipsis;letter-spacing:-0.04px;text-align:right;font-size:6.3px;line-height:7.56px;color:#1c1c1c;font-weight:normal;"><span style="letter-spacing:-0.25px">2.25</span></div>
<div class="t" style="left:873.5px;top:375.94px;width:61px;overflow:hidden;text-overflow:ellipsis;letter-spacing:-0.04px;text-align:left;font-size:6.3px;line-height:7.56px;color:#1c1c1c;font-weight:normal;">Analyse, conception...</div>
<div class="b" style="left:247px;top:394.5px;width:709px;height:1px;background:#ececec"></div>
<div class="t" style="left:250px;top:386.18px;width:39.5px;overflow:hidden;text-overflow:ellipsis;letter-spacing:-0.04px;text-align:right;font-size:6.3px;line-height:7.56px;color:#1c1c1c;font-weight:normal;"><span style="letter-spacing:-0.25px">25091160</span></div>
<div class="t" style="left:292px;top:386.18px;width:40.5px;overflow:hidden;text-overflow:ellipsis;letter-spacing:-0.04px;text-align:right;font-size:6.3px;line-height:7.56px;color:#1c1c1c;font-weight:normal;"><span style="letter-spacing:-0.25px">607172</span></div>
<div class="t" style="left:335px;top:386.18px;width:131px;overflow:hidden;text-overflow:ellipsis;letter-spacing:-0.04px;text-align:left;font-size:6.3px;line-height:7.56px;color:#1c1c1c;font-weight:normal;letter-spacing:-0.06px"><span style="letter-spacing:-0.4px">SALAMANDRE</span> - Extension base produits Bout...</div>
<div class="t" style="left:468px;top:386.18px;width:41px;overflow:hidden;text-overflow:ellipsis;letter-spacing:-0.04px;text-align:left;font-size:6.3px;line-height:7.56px;color:#1c1c1c;font-weight:normal;">Annul&eacute;</div>
<div class="t" style="left:511px;top:386.18px;width:58px;overflow:hidden;text-overflow:ellipsis;letter-spacing:-0.04px;text-align:right;font-size:6.3px;line-height:7.56px;color:#1c1c1c;font-weight:normal;"><span style="letter-spacing:-0.25px">28362939</span></div>
<div class="t" style="left:571.5px;top:386.18px;width:41px;overflow:hidden;text-overflow:ellipsis;letter-spacing:-0.04px;text-align:left;font-size:6.3px;line-height:7.56px;color:#1c1c1c;font-weight:normal;">Termin&eacute;e</div>
<div class="t" style="left:614.5px;top:386.18px;width:41px;overflow:hidden;text-overflow:ellipsis;letter-spacing:-0.04px;text-align:left;font-size:6.3px;line-height:7.56px;color:#1c1c1c;font-weight:normal;"><span style="letter-spacing:-0.25px">30-03-2021</span></div>
<div class="t" style="left:657px;top:386.18px;width:110px;overflow:hidden;text-overflow:ellipsis;letter-spacing:-0.04px;text-align:left;font-size:6.3px;line-height:7.56px;color:#1c1c1c;font-weight:normal;">Orga <span style="letter-spacing:-0.4px">DEV</span></div>
<div class="t" style="left:768.5px;top:386.18px;width:60px;overflow:hidden;text-overflow:ellipsis;letter-spacing:-0.04px;text-align:left;font-size:6.3px;line-height:7.56px;color:#1c1c1c;font-weight:normal;">Ludovic <span style="letter-spacing:-0.4px">FONTERAY</span></div>
<div class="t" style="left:831px;top:386.18px;width:40px;overflow:hidden;text-overflow:ellipsis;letter-spacing:-0.04px;text-align:right;font-size:6.3px;line-height:7.56px;color:#1c1c1c;font-weight:normal;"><span style="letter-spacing:-0.25px">0.75</span></div>
<div class="t" style="left:873.5px;top:386.18px;width:61px;overflow:hidden;text-overflow:ellipsis;letter-spacing:-0.04px;text-align:left;font-size:6.3px;line-height:7.56px;color:#1c1c1c;font-weight:normal;">Organisation <span style="letter-spacing:-0.4px">DEV</span></div>
<div class="b" style="left:247px;top:404.74px;width:709px;height:1px;background:#ececec"></div>
<div class="t" style="left:250px;top:396.42px;width:39.5px;overflow:hidden;text-overflow:ellipsis;letter-spacing:-0.04px;text-align:right;font-size:6.3px;line-height:7.56px;color:#1c1c1c;font-weight:normal;"><span style="letter-spacing:-0.25px">25091161</span></div>
<div class="t" style="left:292px;top:396.42px;width:40.5px;overflow:hidden;text-overflow:ellipsis;letter-spacing:-0.04px;text-align:right;font-size:6.3px;line-height:7.56px;color:#1c1c1c;font-weight:normal;"><span style="letter-spacing:-0.25px">607172</span></div>
<div class="t" style="left:335px;top:396.42px;width:131px;overflow:hidden;text-overflow:ellipsis;letter-spacing:-0.04px;text-align:left;font-size:6.3px;line-height:7.56px;color:#1c1c1c;font-weight:normal;letter-spacing:-0.06px"><span style="letter-spacing:-0.4px">SALAMANDRE</span> - Extension base produits Bout...</div>
<div class="t" style="left:468px;top:396.42px;width:41px;overflow:hidden;text-overflow:ellipsis;letter-spacing:-0.04px;text-align:left;font-size:6.3px;line-height:7.56px;color:#1c1c1c;font-weight:normal;">Annul&eacute;</div>
<div class="t" style="left:511px;top:396.42px;width:58px;overflow:hidden;text-overflow:ellipsis;letter-spacing:-0.04px;text-align:right;font-size:6.3px;line-height:7.56px;color:#1c1c1c;font-weight:normal;"><span style="letter-spacing:-0.25px">28362942</span></div>
<div class="t" style="left:571.5px;top:396.42px;width:41px;overflow:hidden;text-overflow:ellipsis;letter-spacing:-0.04px;text-align:left;font-size:6.3px;line-height:7.56px;color:#1c1c1c;font-weight:normal;">Termin&eacute;e</div>
<div class="t" style="left:614.5px;top:396.42px;width:41px;overflow:hidden;text-overflow:ellipsis;letter-spacing:-0.04px;text-align:left;font-size:6.3px;line-height:7.56px;color:#1c1c1c;font-weight:normal;"><span style="letter-spacing:-0.25px">31-03-2021</span></div>
<div class="t" style="left:657px;top:396.42px;width:110px;overflow:hidden;text-overflow:ellipsis;letter-spacing:-0.04px;text-align:left;font-size:6.3px;line-height:7.56px;color:#1c1c1c;font-weight:normal;">Sp&eacute;cifications d&eacute;taill&eacute;es</div>
<div class="t" style="left:768.5px;top:396.42px;width:60px;overflow:hidden;text-overflow:ellipsis;letter-spacing:-0.04px;text-align:left;font-size:6.3px;line-height:7.56px;color:#1c1c1c;font-weight:normal;">Ludovic <span style="letter-spacing:-0.4px">FONTERAY</span></div>
<div class="t" style="left:831px;top:396.42px;width:40px;overflow:hidden;text-overflow:ellipsis;letter-spacing:-0.04px;text-align:right;font-size:6.3px;line-height:7.56px;color:#1c1c1c;font-weight:normal;">1</div>
<div class="t" style="left:873.5px;top:396.42px;width:61px;overflow:hidden;text-overflow:ellipsis;letter-spacing:-0.04px;text-align:left;font-size:6.3px;line-height:7.56px;color:#1c1c1c;font-weight:normal;">Analyse, conception...</div>
<div class="b" style="left:247px;top:414.98px;width:709px;height:1px;background:#ececec"></div>
<div class="t" style="left:250px;top:406.66px;width:39.5px;overflow:hidden;text-overflow:ellipsis;letter-spacing:-0.04px;text-align:right;font-size:6.3px;line-height:7.56px;color:#1c1c1c;font-weight:normal;"><span style="letter-spacing:-0.25px">25091182</span></div>
<div class="t" style="left:292px;top:406.66px;width:40.5px;overflow:hidden;text-overflow:ellipsis;letter-spacing:-0.04px;text-align:right;font-size:6.3px;line-height:7.56px;color:#1c1c1c;font-weight:normal;"><span style="letter-spacing:-0.25px">607172</span></div>
<div class="t" style="left:335px;top:406.66px;width:131px;overflow:hidden;text-overflow:ellipsis;letter-spacing:-0.04px;text-align:left;font-size:6.3px;line-height:7.56px;color:#1c1c1c;font-weight:normal;letter-spacing:-0.06px"><span style="letter-spacing:-0.4px">SALAMANDRE</span> - Extension base produits Bout...</div>
<div class="t" style="left:468px;top:406.66px;width:41px;overflow:hidden;text-overflow:ellipsis;letter-spacing:-0.04px;text-align:left;font-size:6.3px;line-height:7.56px;color:#1c1c1c;font-weight:normal;">Annul&eacute;</div>
<div class="t" style="left:511px;top:406.66px;width:58px;overflow:hidden;text-overflow:ellipsis;letter-spacing:-0.04px;text-align:right;font-size:6.3px;line-height:7.56px;color:#1c1c1c;font-weight:normal;"><span style="letter-spacing:-0.25px">28474503</span></div>
<div class="t" style="left:571.5px;top:406.66px;width:41px;overflow:hidden;text-overflow:ellipsis;letter-spacing:-0.04px;text-align:left;font-size:6.3px;line-height:7.56px;color:#1c1c1c;font-weight:normal;">Termin&eacute;e</div>
<div class="t" style="left:614.5px;top:406.66px;width:41px;overflow:hidden;text-overflow:ellipsis;letter-spacing:-0.04px;text-align:left;font-size:6.3px;line-height:7.56px;color:#1c1c1c;font-weight:normal;"><span style="letter-spacing:-0.25px">01-04-2021</span></div>
<div class="t" style="left:657px;top:406.66px;width:110px;overflow:hidden;text-overflow:ellipsis;letter-spacing:-0.04px;text-align:left;font-size:6.3px;line-height:7.56px;color:#1c1c1c;font-weight:normal;">Pr&eacute;paration module test</div>
<div class="t" style="left:768.5px;top:406.66px;width:60px;overflow:hidden;text-overflow:ellipsis;letter-spacing:-0.04px;text-align:left;font-size:6.3px;line-height:7.56px;color:#1c1c1c;font-weight:normal;">Ludovic <span style="letter-spacing:-0.4px">FONTERAY</span></div>
<div class="t" style="left:831px;top:406.66px;width:40px;overflow:hidden;text-overflow:ellipsis;letter-spacing:-0.04px;text-align:right;font-size:6.3px;line-height:7.56px;color:#1c1c1c;font-weight:normal;">1</div>
<div class="t" style="left:873.5px;top:406.66px;width:61px;overflow:hidden;text-overflow:ellipsis;letter-spacing:-0.04px;text-align:left;font-size:6.3px;line-height:7.56px;color:#1c1c1c;font-weight:normal;">Impl&eacute;mentation</div>
<div class="b" style="left:247px;top:425.22px;width:709px;height:1px;background:#ececec"></div>
<div class="t" style="left:250px;top:416.90px;width:39.5px;overflow:hidden;text-overflow:ellipsis;letter-spacing:-0.04px;text-align:right;font-size:6.3px;line-height:7.56px;color:#1c1c1c;font-weight:normal;"><span style="letter-spacing:-0.25px">25238246</span></div>
<div class="t" style="left:292px;top:416.90px;width:40.5px;overflow:hidden;text-overflow:ellipsis;letter-spacing:-0.04px;text-align:right;font-size:6.3px;line-height:7.56px;color:#1c1c1c;font-weight:normal;"><span style="letter-spacing:-0.25px">612038</span></div>
<div class="t" style="left:335px;top:416.90px;width:131px;overflow:hidden;text-overflow:ellipsis;letter-spacing:-0.04px;text-align:left;font-size:6.3px;line-height:7.56px;color:#1c1c1c;font-weight:normal;letter-spacing:-0.06px"><span style="letter-spacing:-0.4px">SALAMANDRE L</span>iaison <span style="letter-spacing:-0.4px">TBS</span> &gt; <span style="letter-spacing:-0.4px">MO</span></div>
<div class="t" style="left:468px;top:416.90px;width:41px;overflow:hidden;text-overflow:ellipsis;letter-spacing:-0.04px;text-align:left;font-size:6.3px;line-height:7.56px;color:#1c1c1c;font-weight:normal;">Termin&eacute;</div>
<div class="t" style="left:511px;top:416.90px;width:58px;overflow:hidden;text-overflow:ellipsis;letter-spacing:-0.04px;text-align:right;font-size:6.3px;line-height:7.56px;color:#1c1c1c;font-weight:normal;"><span style="letter-spacing:-0.25px">28673542</span></div>
<div class="t" style="left:571.5px;top:416.90px;width:41px;overflow:hidden;text-overflow:ellipsis;letter-spacing:-0.04px;text-align:left;font-size:6.3px;line-height:7.56px;color:#1c1c1c;font-weight:normal;">Termin&eacute;e</div>
<div class="t" style="left:614.5px;top:416.90px;width:41px;overflow:hidden;text-overflow:ellipsis;letter-spacing:-0.04px;text-align:left;font-size:6.3px;line-height:7.56px;color:#1c1c1c;font-weight:normal;"><span style="letter-spacing:-0.25px">02-04-2021</span></div>
<div class="t" style="left:657px;top:416.90px;width:110px;overflow:hidden;text-overflow:ellipsis;letter-spacing:-0.04px;text-align:left;font-size:6.3px;line-height:7.56px;color:#1c1c1c;font-weight:normal;">Sp&eacute;cifications d&eacute;taill&eacute;es</div>
<div class="t" style="left:768.5px;top:416.90px;width:60px;overflow:hidden;text-overflow:ellipsis;letter-spacing:-0.04px;text-align:left;font-size:6.3px;line-height:7.56px;color:#1c1c1c;font-weight:normal;">Thibaut <span style="letter-spacing:-0.4px">MOY</span></div>
<div class="t" style="left:831px;top:416.90px;width:40px;overflow:hidden;text-overflow:ellipsis;letter-spacing:-0.04px;text-align:right;font-size:6.3px;line-height:7.56px;color:#1c1c1c;font-weight:normal;">2</div>
<div class="t" style="left:873.5px;top:416.90px;width:61px;overflow:hidden;text-overflow:ellipsis;letter-spacing:-0.04px;text-align:left;font-size:6.3px;line-height:7.56px;color:#1c1c1c;font-weight:normal;">Analyse, conception...</div>
<div class="b" style="left:247px;top:435.46px;width:709px;height:1px;background:#ececec"></div>
<div class="t" style="left:250px;top:427.14px;width:39.5px;overflow:hidden;text-overflow:ellipsis;letter-spacing:-0.04px;text-align:right;font-size:6.3px;line-height:7.56px;color:#1c1c1c;font-weight:normal;"><span style="letter-spacing:-0.25px">25108710</span></div>
<div class="t" style="left:292px;top:427.14px;width:40.5px;overflow:hidden;text-overflow:ellipsis;letter-spacing:-0.04px;text-align:right;font-size:6.3px;line-height:7.56px;color:#1c1c1c;font-weight:normal;"><span style="letter-spacing:-0.25px">607172</span></div>
<div class="t" style="left:335px;top:427.14px;width:131px;overflow:hidden;text-overflow:ellipsis;letter-spacing:-0.04px;text-align:left;font-size:6.3px;line-height:7.56px;color:#1c1c1c;font-weight:normal;letter-spacing:-0.06px"><span style="letter-spacing:-0.4px">SALAMANDRE</span> - Extension base produits Bout...</div>
<div class="t" style="left:468px;top:427.14px;width:41px;overflow:hidden;text-overflow:ellipsis;letter-spacing:-0.04px;text-align:left;font-size:6.3px;line-height:7.56px;color:#1c1c1c;font-weight:normal;">Annul&eacute;</div>
<div class="t" style="left:511px;top:427.14px;width:58px;overflow:hidden;text-overflow:ellipsis;letter-spacing:-0.04px;text-align:right;font-size:6.3px;line-height:7.56px;color:#1c1c1c;font-weight:normal;"><span style="letter-spacing:-0.25px">28474503</span></div>
<div class="t" style="left:571.5px;top:427.14px;width:41px;overflow:hidden;text-overflow:ellipsis;letter-spacing:-0.04px;text-align:left;font-size:6.3px;line-height:7.56px;color:#1c1c1c;font-weight:normal;">Termin&eacute;e</div>
<div class="t" style="left:614.5px;top:427.14px;width:41px;overflow:hidden;text-overflow:ellipsis;letter-spacing:-0.04px;text-align:left;font-size:6.3px;line-height:7.56px;color:#1c1c1c;font-weight:normal;"><span style="letter-spacing:-0.25px">02-04-2021</span></div>
<div class="t" style="left:657px;top:427.14px;width:110px;overflow:hidden;text-overflow:ellipsis;letter-spacing:-0.04px;text-align:left;font-size:6.3px;line-height:7.56px;color:#1c1c1c;font-weight:normal;">Pr&eacute;paration module test</div>
<div class="t" style="left:768.5px;top:427.14px;width:60px;overflow:hidden;text-overflow:ellipsis;letter-spacing:-0.04px;text-align:left;font-size:6.3px;line-height:7.56px;color:#1c1c1c;font-weight:normal;">Ludovic <span style="letter-spacing:-0.4px">FONTERAY</span></div>
<div class="t" style="left:831px;top:427.14px;width:40px;overflow:hidden;text-overflow:ellipsis;letter-spacing:-0.04px;text-align:right;font-size:6.3px;line-height:7.56px;color:#1c1c1c;font-weight:normal;"><span style="letter-spacing:-0.25px">0.75</span></div>
<div class="t" style="left:873.5px;top:427.14px;width:61px;overflow:hidden;text-overflow:ellipsis;letter-spacing:-0.04px;text-align:left;font-size:6.3px;line-height:7.56px;color:#1c1c1c;font-weight:normal;">Impl&eacute;mentation</div>
<div class="b" style="left:247px;top:445.7px;width:709px;height:1px;background:#ececec"></div>
<div class="t" style="left:250px;top:437.38px;width:39.5px;overflow:hidden;text-overflow:ellipsis;letter-spacing:-0.04px;text-align:right;font-size:6.3px;line-height:7.56px;color:#1c1c1c;font-weight:normal;"><span style="letter-spacing:-0.25px">25108667</span></div>
<div class="t" style="left:292px;top:437.38px;width:40.5px;overflow:hidden;text-overflow:ellipsis;letter-spacing:-0.04px;text-align:right;font-size:6.3px;line-height:7.56px;color:#1c1c1c;font-weight:normal;"><span style="letter-spacing:-0.25px">607172</span></div>
<div class="t" style="left:335px;top:437.38px;width:131px;overflow:hidden;text-overflow:ellipsis;letter-spacing:-0.04px;text-align:left;font-size:6.3px;line-height:7.56px;color:#1c1c1c;font-weight:normal;letter-spacing:-0.06px"><span style="letter-spacing:-0.4px">SALAMANDRE</span> - Extension base produits Bout...</div>
<div class="t" style="left:468px;top:437.38px;width:41px;overflow:hidden;text-overflow:ellipsis;letter-spacing:-0.04px;text-align:left;font-size:6.3px;line-height:7.56px;color:#1c1c1c;font-weight:normal;">Annul&eacute;</div>
<div class="t" style="left:511px;top:437.38px;width:58px;overflow:hidden;text-overflow:ellipsis;letter-spacing:-0.04px;text-align:right;font-size:6.3px;line-height:7.56px;color:#1c1c1c;font-weight:normal;"><span style="letter-spacing:-0.25px">28362939</span></div>
<div class="t" style="left:571.5px;top:437.38px;width:41px;overflow:hidden;text-overflow:ellipsis;letter-spacing:-0.04px;text-align:left;font-size:6.3px;line-height:7.56px;color:#1c1c1c;font-weight:normal;">Termin&eacute;e</div>
<div class="t" style="left:614.5px;top:437.38px;width:41px;overflow:hidden;text-overflow:ellipsis;letter-spacing:-0.04px;text-align:left;font-size:6.3px;line-height:7.56px;color:#1c1c1c;font-weight:normal;"><span style="letter-spacing:-0.25px">02-04-2021</span></div>
<div class="t" style="left:657px;top:437.38px;width:110px;overflow:hidden;text-overflow:ellipsis;letter-spacing:-0.04px;text-align:left;font-size:6.3px;line-height:7.56px;color:#1c1c1c;font-weight:normal;">Orga <span style="letter-spacing:-0.4px">DEV</span></div>
<div class="t" style="left:768.5px;top:437.38px;width:60px;overflow:hidden;text-overflow:ellipsis;letter-spacing:-0.04px;text-align:left;font-size:6.3px;line-height:7.56px;color:#1c1c1c;font-weight:normal;">Ludovic <span style="letter-spacing:-0.4px">FONTERAY</span></div>
<div class="t" style="left:831px;top:437.38px;width:40px;overflow:hidden;text-overflow:ellipsis;letter-spacing:-0.04px;text-align:right;font-size:6.3px;line-height:7.56px;color:#1c1c1c;font-weight:normal;"><span style="letter-spacing:-0.25px">0.33</span></div>
<div class="t" style="left:873.5px;top:437.38px;width:61px;overflow:hidden;text-overflow:ellipsis;letter-spacing:-0.04px;text-align:left;font-size:6.3px;line-height:7.56px;color:#1c1c1c;font-weight:normal;">Organisation <span style="letter-spacing:-0.4px">DEV</span></div>
<div class="b" style="left:247px;top:455.94px;width:709px;height:1px;background:#ececec"></div>
<div class="t" style="left:250px;top:447.62px;width:39.5px;overflow:hidden;text-overflow:ellipsis;letter-spacing:-0.04px;text-align:right;font-size:6.3px;line-height:7.56px;color:#1c1c1c;font-weight:normal;"><span style="letter-spacing:-0.25px">25209503</span></div>
<div class="t" style="left:292px;top:447.62px;width:40.5px;overflow:hidden;text-overflow:ellipsis;letter-spacing:-0.04px;text-align:right;font-size:6.3px;line-height:7.56px;color:#1c1c1c;font-weight:normal;"><span style="letter-spacing:-0.25px">606602</span></div>
<div class="t" style="left:335px;top:447.62px;width:131px;overflow:hidden;text-overflow:ellipsis;letter-spacing:-0.04px;text-align:left;font-size:6.3px;line-height:7.56px;color:#1c1c1c;font-weight:normal;letter-spacing:-0.06px"><span style="letter-spacing:-0.4px">SALAMANDRE SSO</span></div>
<div class="t" style="left:468px;top:447.62px;width:41px;overflow:hidden;text-overflow:ellipsis;letter-spacing:-0.04px;text-align:left;font-size:6.3px;line-height:7.56px;color:#1c1c1c;font-weight:normal;">Termin&eacute;</div>
<div class="t" style="left:511px;top:447.62px;width:58px;overflow:hidden;text-overflow:ellipsis;letter-spacing:-0.04px;text-align:right;font-size:6.3px;line-height:7.56px;color:#1c1c1c;font-weight:normal;"><span style="letter-spacing:-0.25px">28591230</span></div>
<div class="t" style="left:571.5px;top:447.62px;width:41px;overflow:hidden;text-overflow:ellipsis;letter-spacing:-0.04px;text-align:left;font-size:6.3px;line-height:7.56px;color:#1c1c1c;font-weight:normal;">Termin&eacute;e</div>
<div class="t" style="left:614.5px;top:447.62px;width:41px;overflow:hidden;text-overflow:ellipsis;letter-spacing:-0.04px;text-align:left;font-size:6.3px;line-height:7.56px;color:#1c1c1c;font-weight:normal;"><span style="letter-spacing:-0.25px">05-04-2021</span></div>
<div class="t" style="left:657px;top:447.62px;width:110px;overflow:hidden;text-overflow:ellipsis;letter-spacing:-0.04px;text-align:left;font-size:6.3px;line-height:7.56px;color:#1c1c1c;font-weight:normal;">Rationalisation de la configuration e...</div>
<div class="t" style="left:768.5px;top:447.62px;width:60px;overflow:hidden;text-overflow:ellipsis;letter-spacing:-0.04px;text-align:left;font-size:6.3px;line-height:7.56px;color:#1c1c1c;font-weight:normal;">L&eacute;onard <span style="letter-spacing:-0.4px">POTHERAT</span></div>
<div class="t" style="left:831px;top:447.62px;width:40px;overflow:hidden;text-overflow:ellipsis;letter-spacing:-0.04px;text-align:right;font-size:6.3px;line-height:7.56px;color:#1c1c1c;font-weight:normal;">3</div>
<div class="t" style="left:873.5px;top:447.62px;width:61px;overflow:hidden;text-overflow:ellipsis;letter-spacing:-0.04px;text-align:left;font-size:6.3px;line-height:7.56px;color:#1c1c1c;font-weight:normal;">Impl&eacute;mentation</div>
<div class="b" style="left:247px;top:466.18px;width:709px;height:1px;background:#ececec"></div>
<div class="t" style="left:250px;top:457.86px;width:39.5px;overflow:hidden;text-overflow:ellipsis;letter-spacing:-0.04px;text-align:right;font-size:6.3px;line-height:7.56px;color:#1c1c1c;font-weight:normal;"><span style="letter-spacing:-0.25px">25238365</span></div>
<div class="t" style="left:292px;top:457.86px;width:40.5px;overflow:hidden;text-overflow:ellipsis;letter-spacing:-0.04px;text-align:right;font-size:6.3px;line-height:7.56px;color:#1c1c1c;font-weight:normal;"><span style="letter-spacing:-0.25px">612038</span></div>
<div class="t" style="left:335px;top:457.86px;width:131px;overflow:hidden;text-overflow:ellipsis;letter-spacing:-0.04px;text-align:left;font-size:6.3px;line-height:7.56px;color:#1c1c1c;font-weight:normal;letter-spacing:-0.06px"><span style="letter-spacing:-0.4px">SALAMANDRE L</span>iaison <span style="letter-spacing:-0.4px">TBS</span> &gt; <span style="letter-spacing:-0.4px">MO</span></div>
<div class="t" style="left:468px;top:457.86px;width:41px;overflow:hidden;text-overflow:ellipsis;letter-spacing:-0.04px;text-align:left;font-size:6.3px;line-height:7.56px;color:#1c1c1c;font-weight:normal;">Termin&eacute;</div>
<div class="t" style="left:511px;top:457.86px;width:58px;overflow:hidden;text-overflow:ellipsis;letter-spacing:-0.04px;text-align:right;font-size:6.3px;line-height:7.56px;color:#1c1c1c;font-weight:normal;"><span style="letter-spacing:-0.25px">28673536</span></div>
<div class="t" style="left:571.5px;top:457.86px;width:41px;overflow:hidden;text-overflow:ellipsis;letter-spacing:-0.04px;text-align:left;font-size:6.3px;line-height:7.56px;color:#1c1c1c;font-weight:normal;">Termin&eacute;e</div>
<div class="t" style="left:614.5px;top:457.86px;width:41px;overflow:hidden;text-overflow:ellipsis;letter-spacing:-0.04px;text-align:left;font-size:6.3px;line-height:7.56px;color:#1c1c1c;font-weight:normal;"><span style="letter-spacing:-0.25px">06-04-2021</span></div>
<div class="t" style="left:657px;top:457.86px;width:110px;overflow:hidden;text-overflow:ellipsis;letter-spacing:-0.04px;text-align:left;font-size:6.3px;line-height:7.56px;color:#1c1c1c;font-weight:normal;">R&eacute;unions de cadrage</div>
<div class="t" style="left:768.5px;top:457.86px;width:60px;overflow:hidden;text-overflow:ellipsis;letter-spacing:-0.04px;text-align:left;font-size:6.3px;line-height:7.56px;color:#1c1c1c;font-weight:normal;">Thibaut <span style="letter-spacing:-0.4px">MOY</span></div>
<div class="t" style="left:831px;top:457.86px;width:40px;overflow:hidden;text-overflow:ellipsis;letter-spacing:-0.04px;text-align:right;font-size:6.3px;line-height:7.56px;color:#1c1c1c;font-weight:normal;">1</div>
<div class="t" style="left:873.5px;top:457.86px;width:61px;overflow:hidden;text-overflow:ellipsis;letter-spacing:-0.04px;text-align:left;font-size:6.3px;line-height:7.56px;color:#1c1c1c;font-weight:normal;">Suivi projet et enca...</div>
<div class="b" style="left:247px;top:476.42px;width:709px;height:1px;background:#ececec"></div>
<div class="t" style="left:250px;top:468.10px;width:39.5px;overflow:hidden;text-overflow:ellipsis;letter-spacing:-0.04px;text-align:right;font-size:6.3px;line-height:7.56px;color:#1c1c1c;font-weight:normal;"><span style="letter-spacing:-0.25px">25238374</span></div>
<div class="t" style="left:292px;top:468.10px;width:40.5px;overflow:hidden;text-overflow:ellipsis;letter-spacing:-0.04px;text-align:right;font-size:6.3px;line-height:7.56px;color:#1c1c1c;font-weight:normal;"><span style="letter-spacing:-0.25px">612038</span></div>
<div class="t" style="left:335px;top:468.10px;width:131px;overflow:hidden;text-overflow:ellipsis;letter-spacing:-0.04px;text-align:left;font-size:6.3px;line-height:7.56px;color:#1c1c1c;font-weight:normal;letter-spacing:-0.06px"><span style="letter-spacing:-0.4px">SALAMANDRE L</span>iaison <span style="letter-spacing:-0.4px">TBS</span> &gt; <span style="letter-spacing:-0.4px">MO</span></div>
<div class="t" style="left:468px;top:468.10px;width:41px;overflow:hidden;text-overflow:ellipsis;letter-spacing:-0.04px;text-align:left;font-size:6.3px;line-height:7.56px;color:#1c1c1c;font-weight:normal;">Termin&eacute;</div>
<div class="t" style="left:511px;top:468.10px;width:58px;overflow:hidden;text-overflow:ellipsis;letter-spacing:-0.04px;text-align:right;font-size:6.3px;line-height:7.56px;color:#1c1c1c;font-weight:normal;"><span style="letter-spacing:-0.25px">28673536</span></div>
<div class="t" style="left:571.5px;top:468.10px;width:41px;overflow:hidden;text-overflow:ellipsis;letter-spacing:-0.04px;text-align:left;font-size:6.3px;line-height:7.56px;color:#1c1c1c;font-weight:normal;">Termin&eacute;e</div>
<div class="t" style="left:614.5px;top:468.10px;width:41px;overflow:hidden;text-overflow:ellipsis;letter-spacing:-0.04px;text-align:left;font-size:6.3px;line-height:7.56px;color:#1c1c1c;font-weight:normal;"><span style="letter-spacing:-0.25px">06-04-2021</span></div>
<div class="t" style="left:657px;top:468.10px;width:110px;overflow:hidden;text-overflow:ellipsis;letter-spacing:-0.04px;text-align:left;font-size:6.3px;line-height:7.56px;color:#1c1c1c;font-weight:normal;">R&eacute;unions de cadrage</div>
<div class="t" style="left:768.5px;top:468.10px;width:60px;overflow:hidden;text-overflow:ellipsis;letter-spacing:-0.04px;text-align:left;font-size:6.3px;line-height:7.56px;color:#1c1c1c;font-weight:normal;">Thibaut <span style="letter-spacing:-0.4px">MOY</span></div>
<div class="t" style="left:831px;top:468.10px;width:40px;overflow:hidden;text-overflow:ellipsis;letter-spacing:-0.04px;text-align:right;font-size:6.3px;line-height:7.56px;color:#1c1c1c;font-weight:normal;">1</div>
<div class="t" style="left:873.5px;top:468.10px;width:61px;overflow:hidden;text-overflow:ellipsis;letter-spacing:-0.04px;text-align:left;font-size:6.3px;line-height:7.56px;color:#1c1c1c;font-weight:normal;">Suivi projet et enca...</div>
<div class="b" style="left:247px;top:486.65999999999997px;width:709px;height:1px;background:#ececec"></div>
<div class="t" style="left:250px;top:478.34px;width:39.5px;overflow:hidden;text-overflow:ellipsis;letter-spacing:-0.04px;text-align:right;font-size:6.3px;line-height:7.56px;color:#1c1c1c;font-weight:normal;"><span style="letter-spacing:-0.25px">25238385</span></div>
<div class="t" style="left:292px;top:478.34px;width:40.5px;overflow:hidden;text-overflow:ellipsis;letter-spacing:-0.04px;text-align:right;font-size:6.3px;line-height:7.56px;color:#1c1c1c;font-weight:normal;"><span style="letter-spacing:-0.25px">612038</span></div>
<div class="t" style="left:335px;top:478.34px;width:131px;overflow:hidden;text-overflow:ellipsis;letter-spacing:-0.04px;text-align:left;font-size:6.3px;line-height:7.56px;color:#1c1c1c;font-weight:normal;letter-spacing:-0.06px"><span style="letter-spacing:-0.4px">SALAMANDRE L</span>iaison <span style="letter-spacing:-0.4px">TBS</span> &gt; <span style="letter-spacing:-0.4px">MO</span></div>
<div class="t" style="left:468px;top:478.34px;width:41px;overflow:hidden;text-overflow:ellipsis;letter-spacing:-0.04px;text-align:left;font-size:6.3px;line-height:7.56px;color:#1c1c1c;font-weight:normal;">Termin&eacute;</div>
<div class="t" style="left:511px;top:478.34px;width:58px;overflow:hidden;text-overflow:ellipsis;letter-spacing:-0.04px;text-align:right;font-size:6.3px;line-height:7.56px;color:#1c1c1c;font-weight:normal;"><span style="letter-spacing:-0.25px">28673542</span></div>
<div class="t" style="left:571.5px;top:478.34px;width:41px;overflow:hidden;text-overflow:ellipsis;letter-spacing:-0.04px;text-align:left;font-size:6.3px;line-height:7.56px;color:#1c1c1c;font-weight:normal;">Termin&eacute;e</div>
<div class="t" style="left:614.5px;top:478.34px;width:41px;overflow:hidden;text-overflow:ellipsis;letter-spacing:-0.04px;text-align:left;font-size:6.3px;line-height:7.56px;color:#1c1c1c;font-weight:normal;"><span style="letter-spacing:-0.25px">06-04-2021</span></div>
<div class="t" style="left:657px;top:478.34px;width:110px;overflow:hidden;text-overflow:ellipsis;letter-spacing:-0.04px;text-align:left;font-size:6.3px;line-height:7.56px;color:#1c1c1c;font-weight:normal;">Sp&eacute;cifications d&eacute;taill&eacute;es</div>
<div class="t" style="left:768.5px;top:478.34px;width:60px;overflow:hidden;text-overflow:ellipsis;letter-spacing:-0.04px;text-align:left;font-size:6.3px;line-height:7.56px;color:#1c1c1c;font-weight:normal;">Thibaut <span style="letter-spacing:-0.4px">MOY</span></div>
<div class="t" style="left:831px;top:478.34px;width:40px;overflow:hidden;text-overflow:ellipsis;letter-spacing:-0.04px;text-align:right;font-size:6.3px;line-height:7.56px;color:#1c1c1c;font-weight:normal;"><span style="letter-spacing:-0.25px">3.5</span></div>
<div class="t" style="left:873.5px;top:478.34px;width:61px;overflow:hidden;text-overflow:ellipsis;letter-spacing:-0.04px;text-align:left;font-size:6.3px;line-height:7.56px;color:#1c1c1c;font-weight:normal;">Analyse, conception...</div>
</div>
<div class="b" style="left:247px;top:483px;width:709px;height:8px;background:#e6e6e6"></div>
<div class="b" style="left:247px;top:483px;width:337px;height:8px;background:#d6d6d6"></div>
<svg class="b" style="left:251px;top:485px" width="4" height="5" viewBox="0 0 4 5"><path d="M4 0V5L0 2.5Z" fill="#444"/></svg>
<div class="b" style="left:419px;top:485px;width:3px;height:4px;border-left:1px solid #777;border-right:1px solid #777"></div>
<div class="b" style="left:245px;top:491px;width:711px;height:2px;background:#fff"></div>
</div>
<div class="b" style="left:303px;top:179px;width:138px;height:32px;background:#fff;border:1px solid #cfcfcf;box-shadow:0 1px 2px rgba(0,0,0,0.18)"></div>
<div class="b" style="left:304px;top:198px;width:136px;height:12px;background:#f0f0f0"></div>
<div class="t" style="left:309px;top:185.10px;font-size:6.5px;line-height:7.80px;color:#222;font-weight:normal;">Step 3: Calculate [DateAsNumber] = [Date]</div>
<svg class="b" style="left:308px;top:200px" width="10" height="9" viewBox="0 0 10 9"><rect x="0.5" y="0.5" width="8.5" height="8" fill="#fff" stroke="#aaa" stroke-width="0.5"/><rect x="0.5" y="0.5" width="8.5" height="1.5" fill="#ccc"/><path d="M1 5.5H5M3.5 4L5.2 5.5L3.5 7" stroke="#0a9a0a" stroke-width="1" fill="none"/></svg>
<div class="t" style="left:320px;top:200.10px;font-size:6.5px;line-height:7.80px;color:#222;font-weight:normal;">30&times;13 329</div>
<div class="b" style="left:355px;top:200px;width:1px;height:8px;background:#bbb"></div>
<svg class="b" style="left:362px;top:200px" width="10" height="9" viewBox="0 0 10 9"><rect x="0.5" y="0.5" width="8.5" height="8" fill="#fff" stroke="#aaa" stroke-width="0.5"/><rect x="0.5" y="0.5" width="8.5" height="1.5" fill="#ccc"/><path d="M2 5.5H7M5.5 4L7.2 5.5L5.5 7" stroke="#1a73d9" stroke-width="1" fill="none"/></svg>
<div class="t" style="left:374px;top:200.10px;font-size:6.5px;line-height:7.80px;color:#222;font-weight:normal;"><span style="color:#1a4fd9">31</span>&times;13 329</div>
<div class="t" style="right:586px;top:200.10px;font-size:6.5px;line-height:7.80px;color:#222;font-weight:normal;">&lt;0,01s</div>
<svg class="b" style="left:304px;top:167px" width="8" height="12" viewBox="0 0 8 12"><path d="M0.5 0.5V9.5L2.8 7.5L4.5 11L6 10.3L4.3 7H7.5Z" fill="#fff" stroke="#333" stroke-width="0.6"/></svg>
<div class="b" style="left:956px;top:60px;width:9px;height:443px;background:#e6e6e6"></div>
<div class="b" style="left:956px;top:61px;width:8px;height:9px;background:#d9d9d9"></div>
<svg class="b" style="left:958px;top:64px" width="5" height="3" viewBox="0 0 5 3"><path d="M0 3H5L2.5 0Z" fill="#333"/></svg>
<div class="b" style="left:956px;top:226px;width:9px;height:256px;background:#d2d2d2"></div>
<div class="b" style="left:958px;top:354px;width:5px;height:3px;border-top:1px solid #777;border-bottom:1px solid #777"></div>
<svg class="b" style="left:958px;top:488px" width="5" height="3" viewBox="0 0 5 3"><path d="M0 0H5L2.5 3Z" fill="#333"/></svg>
<div class="b" style="left:194px;top:495px;width:762px;height:8px;background:#e8e8e8"></div>
<div class="b" style="left:194px;top:495px;width:241px;height:8px;background:#d9d9d9"></div>
<svg class="b" style="left:197px;top:497px" width="3" height="4" viewBox="0 0 3 4"><path d="M3 0V4L0 2Z" fill="#333"/></svg>
<div class="b" style="left:317px;top:497px;width:3px;height:4px;border-left:1px solid #777;border-right:1px solid #777"></div>
<svg class="b" style="left:948px;top:497px" width="3" height="4" viewBox="0 0 3 4"><path d="M0 0V4L3 2Z" fill="#333"/></svg>
<div class="b" style="left:194px;top:503px;width:829px;height:19px;background:#fff"></div>
<div class="b" style="left:193px;top:503px;width:34px;height:17px;background:#ebebeb"></div>
<div class="b" style="left:193px;top:519px;width:34px;height:2px;background:#12a012"></div>
<div class="t" style="left:198px;top:507.60px;font-size:6.5px;line-height:7.80px;color:#333;font-weight:normal;">Group 1</div>
<svg class="b" style="left:229.5px;top:507.7px" width="9" height="9" viewBox="0 0 9 9"><circle cx="4.5" cy="4.5" r="3.7" fill="#0a990a"/><path d="M4.5 3.2V5.8M3.2 4.5H5.8" stroke="#fff" stroke-width="1.1"/></svg>
<div class="b" style="left:241px;top:503px;width:1px;height:18px;background:#ececec"></div>
<div class="b" style="left:0px;top:521px;width:1023px;height:1px;background:#e6e6e6"></div>
<div class="b" style="left:965px;top:60px;width:58px;height:461px;background:#fff"></div>
<div class="t" style="left:973px;top:66.60px;font-size:6.5px;line-height:7.80px;color:#111;font-weight:bold;">Modules</div>
<svg class="b" style="left:1017px;top:66px" width="6" height="8" viewBox="0 0 6 8"><path d="M2 0.5H5M3.5 0.5V5M1 5H6M3.5 5V8" stroke="#7cb8ea" stroke-width="0.7"/></svg>
<svg class="b" style="left:975px;top:84px" width="7" height="10" viewBox="0 0 7 10"><path d="M0.8 0.5V9.5" stroke="#e8303a" stroke-width="1.2"/><path d="M1 0.8H6L4.5 3L6 5.2H1Z" fill="#e8303a"/></svg>
<div class="t" style="left:986px;top:84.70px;font-size:6.5px;line-height:7.80px;color:#222;font-weight:normal;">Main</div>
<svg class="b" style="left:975px;top:104px" width="10" height="10" viewBox="0 0 10 10"><path d="M1 0.5H6L8 2.5V9.5H1Z" fill="#fff" stroke="#aaa" stroke-width="0.5"/><rect x="2.5" y="2.5" width="7" height="7" fill="#13a02b"/><path d="M6 4V8M4 6H8" stroke="#fff" stroke-width="1.2"/></svg>
<div class="t" style="left:988px;top:104.80px;font-size:6.5px;line-height:7.80px;color:#222;font-weight:normal;">Add module</div>
<svg class="b" style="left:965px;top:288px" width="3" height="5" viewBox="0 0 3 5"><path d="M0 0V5L3 2.5Z" fill="#333"/></svg>
</body></html>
